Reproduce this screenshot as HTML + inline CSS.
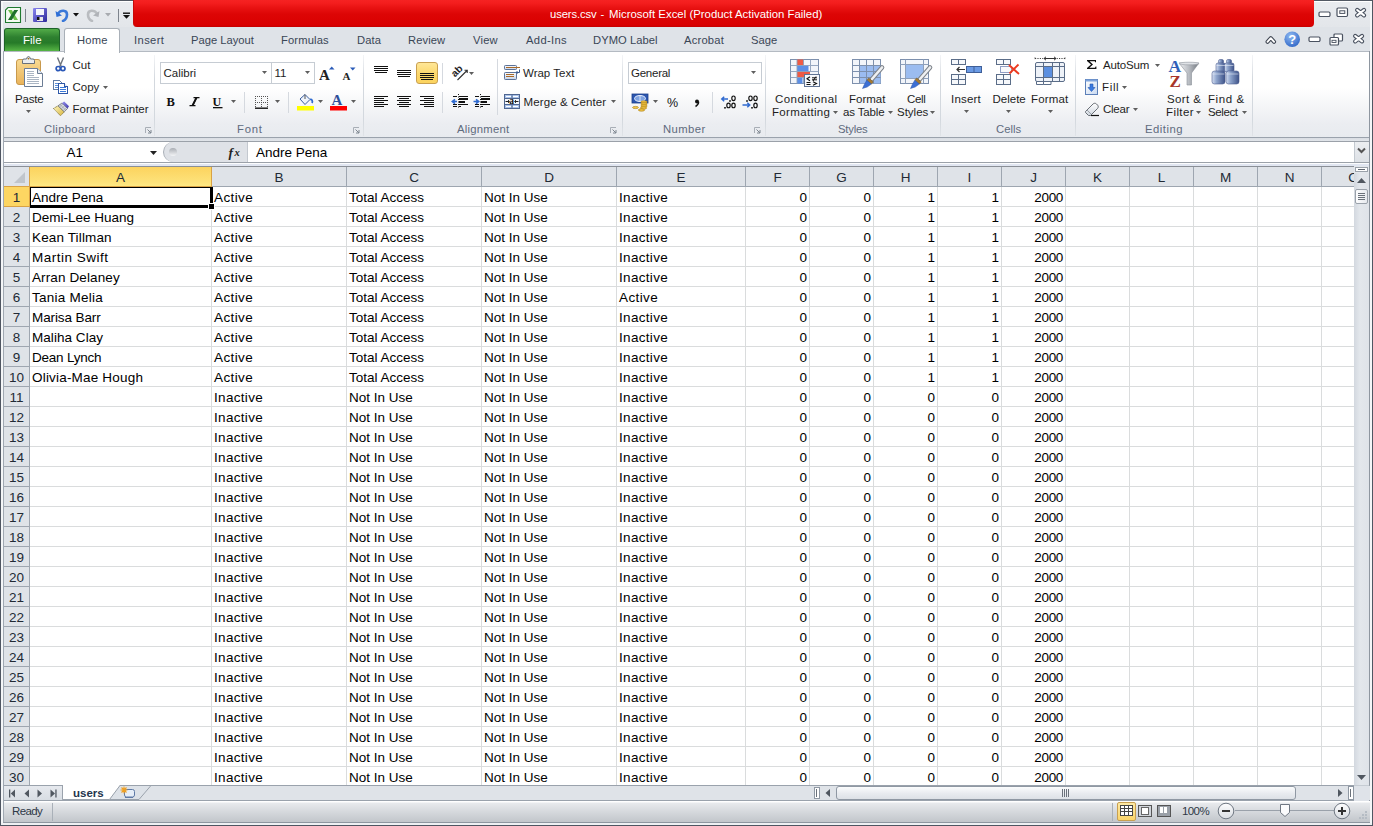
<!DOCTYPE html>
<html><head><meta charset="utf-8"><style>
*{margin:0;padding:0;box-sizing:border-box}
html,body{width:1373px;height:826px;overflow:hidden;background:#dfe3e8;font-family:"Liberation Sans", sans-serif}
.a{position:absolute}
.t{position:absolute;white-space:pre;line-height:1;font-family:"Liberation Sans", sans-serif}
.c{position:absolute;white-space:pre;font-size:13.5px;line-height:1;color:#000}
</style></head>
<body>
<div class="a" style="left:0px;top:0px;width:1373px;height:826px;background:#dfe3e8"></div><div class="a" style="left:0px;top:0px;width:1373px;height:27px;background:linear-gradient(#e9ecf0,#e3e6ea)"></div><div class="a" style="left:0px;top:0px;width:1373px;height:1px;background:#525964"></div><div class="a" style="left:1px;top:1px;width:1371px;height:1px;background:#ffffff"></div><div class="a" style="left:133px;top:0px;width:1181px;height:27px;background:linear-gradient(#f62222 0px,#f41e1e 3px,#e81212 8px,#dd0606 14px,#d90000 25px,#c40000 27px);border-radius:0 0 4px 4px;border-left:1px solid #c80a0a"></div><div class="t" style="left:550px;top:9.00px;font-size:11.25px;color:#ffffff;letter-spacing:-0.1px">users.csv</div><div class="t" style="left:600.5px;top:9.00px;font-size:11.25px;color:#ffffff;">-</div><div class="t" style="left:609px;top:9.00px;font-size:11.4px;color:#ffffff;">Microsoft Excel (Product Activation Failed)</div><div class="a" style="left:4px;top:28px;width:56px;height:24px;background:linear-gradient(#52ac48,#2e8030 35%,#267a28 60%,#5cbc48);border:1px solid #1d6328;border-bottom:none;border-radius:3px 3px 0 0"></div><div class="t" style="left:23px;top:35.00px;font-size:11.5px;color:#ffffff;">File</div><div class="t" style="left:134px;top:35.00px;font-size:11.2px;color:#3a4656;letter-spacing:0.4px">Insert</div><div class="t" style="left:191px;top:35.00px;font-size:11.2px;color:#3a4656;letter-spacing:0px">Page Layout</div><div class="t" style="left:281px;top:35.00px;font-size:11.2px;color:#3a4656;letter-spacing:0.15px">Formulas</div><div class="t" style="left:357px;top:35.00px;font-size:11.2px;color:#3a4656;letter-spacing:0.1px">Data</div><div class="t" style="left:408px;top:35.00px;font-size:11.2px;color:#3a4656;letter-spacing:0.1px">Review</div><div class="t" style="left:473px;top:35.00px;font-size:11.2px;color:#3a4656;letter-spacing:0.2px">View</div><div class="t" style="left:526px;top:35.00px;font-size:11.2px;color:#3a4656;letter-spacing:0.35px">Add-Ins</div><div class="t" style="left:593px;top:35.00px;font-size:11.2px;color:#3a4656;letter-spacing:0.05px">DYMO Label</div><div class="t" style="left:684px;top:35.00px;font-size:11.2px;color:#3a4656;letter-spacing:0.2px">Acrobat</div><div class="t" style="left:751px;top:35.00px;font-size:11.2px;color:#3a4656;letter-spacing:0px">Sage</div><div class="a" style="left:3px;top:51px;width:1367px;height:87px;background:linear-gradient(#ffffff 0%,#ffffff 42%,#f4f5f7 65%,#ebedf1 85%,#e8ebef 100%);border:1px solid #9aa2ac;border-top-color:#b4bac2"></div><div class="a" style="left:64px;top:28px;width:56px;height:25px;background:#fff;border:1px solid #a9b0b8;border-bottom:none;border-radius:3px 3px 0 0"></div><div class="t" style="left:77px;top:35.00px;font-size:11.2px;color:#3a4656;letter-spacing:0.2px">Home</div><div class="a" style="left:154px;top:55px;width:1px;height:81px;background:linear-gradient(#f4f5f7,#d3d8de 30%,#d3d8de 80%,#e0e3e7)"></div><div class="a" style="left:363px;top:55px;width:1px;height:81px;background:linear-gradient(#f4f5f7,#d3d8de 30%,#d3d8de 80%,#e0e3e7)"></div><div class="a" style="left:622px;top:55px;width:1px;height:81px;background:linear-gradient(#f4f5f7,#d3d8de 30%,#d3d8de 80%,#e0e3e7)"></div><div class="a" style="left:765px;top:55px;width:1px;height:81px;background:linear-gradient(#f4f5f7,#d3d8de 30%,#d3d8de 80%,#e0e3e7)"></div><div class="a" style="left:940px;top:55px;width:1px;height:81px;background:linear-gradient(#f4f5f7,#d3d8de 30%,#d3d8de 80%,#e0e3e7)"></div><div class="a" style="left:1075px;top:55px;width:1px;height:81px;background:linear-gradient(#f4f5f7,#d3d8de 30%,#d3d8de 80%,#e0e3e7)"></div><div class="a" style="left:1252px;top:55px;width:1px;height:81px;background:linear-gradient(#f4f5f7,#d3d8de 30%,#d3d8de 80%,#e0e3e7)"></div><div class="t" style="left:44px;top:124.00px;font-size:11.3px;color:#5f6b7e;letter-spacing:0.32px">Clipboard</div><div class="t" style="left:237px;top:124.00px;font-size:11.3px;color:#5f6b7e;letter-spacing:0.8px">Font</div><div class="t" style="left:457px;top:124.00px;font-size:11.3px;color:#5f6b7e;letter-spacing:0.25px">Alignment</div><div class="t" style="left:663px;top:124.00px;font-size:11.3px;color:#5f6b7e;letter-spacing:0.4px">Number</div><div class="t" style="left:838px;top:124.00px;font-size:11.3px;color:#5f6b7e;letter-spacing:-0.2px">Styles</div><div class="t" style="left:996px;top:124.00px;font-size:11.3px;color:#5f6b7e;letter-spacing:0px">Cells</div><div class="t" style="left:1145px;top:124.00px;font-size:11.3px;color:#5f6b7e;letter-spacing:0.5px">Editing</div><div class="t" style="left:15px;top:94.00px;font-size:11.5px;color:#1e1e1e;letter-spacing:-0.2px">Paste</div><div class="t" style="left:72.5px;top:60.00px;font-size:11.5px;color:#1e1e1e;">Cut</div><div class="t" style="left:72.5px;top:82.00px;font-size:11.5px;color:#1e1e1e;">Copy</div><div class="t" style="left:72.5px;top:104.00px;font-size:11.5px;color:#1e1e1e;">Format Painter</div><div class="a" style="left:160px;top:62px;width:112px;height:22px;background:#fff;border:1px solid #c6ccd3"></div><div class="a" style="left:271px;top:62px;width:44px;height:22px;background:#fff;border:1px solid #c6ccd3"></div><div class="t" style="left:163.5px;top:68.00px;font-size:11.5px;color:#1e1e1e;">Calibri</div><div class="t" style="left:274.5px;top:68.00px;font-size:11.5px;color:#1e1e1e;">11</div><div class="t" style="left:523px;top:68.00px;font-size:11.5px;color:#1e1e1e;">Wrap Text</div><div class="t" style="left:523.5px;top:97.00px;font-size:11.5px;color:#1e1e1e;letter-spacing:0.11px">Merge &amp; Center</div><div class="a" style="left:628px;top:62px;width:134px;height:22px;background:#fff;border:1px solid #c6ccd3"></div><div class="t" style="left:631px;top:68.00px;font-size:11.5px;color:#1e1e1e;letter-spacing:-0.25px">General</div><div class="t" style="left:775px;top:94.00px;font-size:11.5px;color:#1e1e1e;letter-spacing:0.45px">Conditional</div><div class="t" style="left:772px;top:107.00px;font-size:11.5px;color:#1e1e1e;letter-spacing:0.33px">Formatting</div><div class="t" style="left:849px;top:94.00px;font-size:11.5px;color:#1e1e1e;">Format</div><div class="t" style="left:843px;top:107.00px;font-size:11.5px;color:#1e1e1e;letter-spacing:-0.14px">as Table</div><div class="t" style="left:907px;top:94.00px;font-size:11.5px;color:#1e1e1e;letter-spacing:-0.3px">Cell</div><div class="t" style="left:897px;top:107.00px;font-size:11.5px;color:#1e1e1e;">Styles</div><div class="t" style="left:951px;top:94.00px;font-size:11.5px;color:#1e1e1e;letter-spacing:0.2px">Insert</div><div class="t" style="left:992.5px;top:94.00px;font-size:11.5px;color:#1e1e1e;">Delete</div><div class="t" style="left:1031px;top:94.00px;font-size:11.5px;color:#1e1e1e;letter-spacing:0.17px">Format</div><div class="t" style="left:1103px;top:60.00px;font-size:11.5px;color:#1e1e1e;letter-spacing:-0.15px">AutoSum</div><div class="t" style="left:1102px;top:82.00px;font-size:11.5px;color:#1e1e1e;letter-spacing:0.66px">Fill</div><div class="t" style="left:1103px;top:104.00px;font-size:11.5px;color:#1e1e1e;letter-spacing:-0.25px">Clear</div><div class="t" style="left:1167px;top:94.00px;font-size:11.5px;color:#1e1e1e;letter-spacing:0.4px">Sort &amp;</div><div class="t" style="left:1166px;top:107.00px;font-size:11.5px;color:#1e1e1e;letter-spacing:0.4px">Filter</div><div class="t" style="left:1208px;top:94.00px;font-size:11.5px;color:#1e1e1e;letter-spacing:0.6px">Find &amp;</div><div class="t" style="left:1208px;top:107.00px;font-size:11.5px;color:#1e1e1e;letter-spacing:-0.4px">Select</div><div class="a" style="left:4px;top:138px;width:1366px;height:4px;background:linear-gradient(#d9dde3,#e3e7ec)"></div><div class="a" style="left:4px;top:141px;width:1366px;height:22px;background:#fff;border-top:1px solid #9ba1a9;border-bottom:1px solid #9ba1a9"></div><div class="a" style="left:163px;top:142px;width:85px;height:20px;background:#dfe2e7;border-radius:10px 0 0 10px;border:1px solid #a9afb7;border-top:none;border-bottom:none;border-right:1px solid #c3c8cf"></div><svg class="a" style="left:166px;top:144px" width="14" height="16" viewBox="0 0 14 16" shape-rendering="geometricPrecision"><defs><linearGradient id="nbc" x1="0" y1="0" x2="0" y2="1"><stop offset="0" stop-color="#a9adb3"/><stop offset="1" stop-color="#f4f5f7"/></linearGradient></defs><circle cx="7" cy="8" r="4" fill="url(#nbc)"/></svg><svg class="a" style="left:227px;top:144px" width="18" height="16" viewBox="0 0 18 16" shape-rendering="geometricPrecision"><text x="1.5" y="12.5" font-family="Liberation Serif" font-style="italic" font-weight="bold" font-size="13.5" fill="#222">f</text><text x="7.5" y="12" font-family="Liberation Serif" font-style="italic" font-weight="bold" font-size="10.5" fill="#222">x</text></svg><svg class="a" style="left:150px;top:151px" width="7" height="4" viewBox="0 0 7 4" shape-rendering="geometricPrecision"><path d="M0 0H7L3.5 4Z" fill="#222"/></svg><div class="t" style="left:66.5px;top:146.00px;font-size:13.5px;color:#000;">A1</div><div class="t" style="left:256px;top:146.00px;font-size:13.5px;color:#000;">Andre Pena</div><div class="a" style="left:1354px;top:142px;width:15px;height:20px;background:linear-gradient(#eceef1,#dde1e6);border-left:1px solid #c3c9d0"></div><svg class="a" style="left:1357px;top:147px" width="9" height="7" viewBox="0 0 9 7" shape-rendering="geometricPrecision"><path d="M1 1.5L4.5 5L8 1.5" fill="none" stroke="#555" stroke-width="2"/></svg><div class="a" style="left:4px;top:163px;width:1366px;height:1px;background:#fbfcfd"></div><div class="a" style="left:4px;top:164px;width:1366px;height:2px;background:#e1e6f1"></div><div class="a" style="left:4px;top:166px;width:1350px;height:619px;background:#fff;overflow:hidden"><div class="a" style="left:0px;top:0px;width:1350px;height:21px;background:#dfe3e8;border-top:1px solid #8a8f96;border-bottom:1px solid #9ea6b0"></div><div class="a" style="left:0px;top:0px;width:26px;height:619px;background:#dfe3e8;border-right:1px solid #9ea6b0"></div><div class="a" style="left:0px;top:0px;width:26px;height:1px;background:#8a8f96"></div><svg class="a" style="left:9px;top:5px" width="13" height="13" viewBox="0 0 13 13"><path d="M12 1V12H1Z" fill="#c0c5cb"/></svg><div class="a" style="left:207px;top:21px;width:1px;height:599px;background:#dadcdd"></div><div class="a" style="left:207px;top:1px;width:1px;height:20px;background:#9ea6b0"></div><div class="a" style="left:342px;top:21px;width:1px;height:599px;background:#dadcdd"></div><div class="a" style="left:342px;top:1px;width:1px;height:20px;background:#9ea6b0"></div><div class="a" style="left:477px;top:21px;width:1px;height:599px;background:#dadcdd"></div><div class="a" style="left:477px;top:1px;width:1px;height:20px;background:#9ea6b0"></div><div class="a" style="left:612px;top:21px;width:1px;height:599px;background:#dadcdd"></div><div class="a" style="left:612px;top:1px;width:1px;height:20px;background:#9ea6b0"></div><div class="a" style="left:741px;top:21px;width:1px;height:599px;background:#dadcdd"></div><div class="a" style="left:741px;top:1px;width:1px;height:20px;background:#9ea6b0"></div><div class="a" style="left:805px;top:21px;width:1px;height:599px;background:#dadcdd"></div><div class="a" style="left:805px;top:1px;width:1px;height:20px;background:#9ea6b0"></div><div class="a" style="left:869px;top:21px;width:1px;height:599px;background:#dadcdd"></div><div class="a" style="left:869px;top:1px;width:1px;height:20px;background:#9ea6b0"></div><div class="a" style="left:933px;top:21px;width:1px;height:599px;background:#dadcdd"></div><div class="a" style="left:933px;top:1px;width:1px;height:20px;background:#9ea6b0"></div><div class="a" style="left:997px;top:21px;width:1px;height:599px;background:#dadcdd"></div><div class="a" style="left:997px;top:1px;width:1px;height:20px;background:#9ea6b0"></div><div class="a" style="left:1061px;top:21px;width:1px;height:599px;background:#dadcdd"></div><div class="a" style="left:1061px;top:1px;width:1px;height:20px;background:#9ea6b0"></div><div class="a" style="left:1125px;top:21px;width:1px;height:599px;background:#dadcdd"></div><div class="a" style="left:1125px;top:1px;width:1px;height:20px;background:#9ea6b0"></div><div class="a" style="left:1189px;top:21px;width:1px;height:599px;background:#dadcdd"></div><div class="a" style="left:1189px;top:1px;width:1px;height:20px;background:#9ea6b0"></div><div class="a" style="left:1253px;top:21px;width:1px;height:599px;background:#dadcdd"></div><div class="a" style="left:1253px;top:1px;width:1px;height:20px;background:#9ea6b0"></div><div class="a" style="left:1317px;top:21px;width:1px;height:599px;background:#dadcdd"></div><div class="a" style="left:1317px;top:1px;width:1px;height:20px;background:#9ea6b0"></div><div class="a" style="left:26px;top:40px;width:1324px;height:1px;background:#dadcdd"></div><div class="a" style="left:0px;top:40px;width:25px;height:1px;background:#9ea6b0"></div><div class="a" style="left:26px;top:60px;width:1324px;height:1px;background:#dadcdd"></div><div class="a" style="left:0px;top:60px;width:25px;height:1px;background:#9ea6b0"></div><div class="a" style="left:26px;top:80px;width:1324px;height:1px;background:#dadcdd"></div><div class="a" style="left:0px;top:80px;width:25px;height:1px;background:#9ea6b0"></div><div class="a" style="left:26px;top:100px;width:1324px;height:1px;background:#dadcdd"></div><div class="a" style="left:0px;top:100px;width:25px;height:1px;background:#9ea6b0"></div><div class="a" style="left:26px;top:120px;width:1324px;height:1px;background:#dadcdd"></div><div class="a" style="left:0px;top:120px;width:25px;height:1px;background:#9ea6b0"></div><div class="a" style="left:26px;top:140px;width:1324px;height:1px;background:#dadcdd"></div><div class="a" style="left:0px;top:140px;width:25px;height:1px;background:#9ea6b0"></div><div class="a" style="left:26px;top:160px;width:1324px;height:1px;background:#dadcdd"></div><div class="a" style="left:0px;top:160px;width:25px;height:1px;background:#9ea6b0"></div><div class="a" style="left:26px;top:180px;width:1324px;height:1px;background:#dadcdd"></div><div class="a" style="left:0px;top:180px;width:25px;height:1px;background:#9ea6b0"></div><div class="a" style="left:26px;top:200px;width:1324px;height:1px;background:#dadcdd"></div><div class="a" style="left:0px;top:200px;width:25px;height:1px;background:#9ea6b0"></div><div class="a" style="left:26px;top:220px;width:1324px;height:1px;background:#dadcdd"></div><div class="a" style="left:0px;top:220px;width:25px;height:1px;background:#9ea6b0"></div><div class="a" style="left:26px;top:240px;width:1324px;height:1px;background:#dadcdd"></div><div class="a" style="left:0px;top:240px;width:25px;height:1px;background:#9ea6b0"></div><div class="a" style="left:26px;top:260px;width:1324px;height:1px;background:#dadcdd"></div><div class="a" style="left:0px;top:260px;width:25px;height:1px;background:#9ea6b0"></div><div class="a" style="left:26px;top:280px;width:1324px;height:1px;background:#dadcdd"></div><div class="a" style="left:0px;top:280px;width:25px;height:1px;background:#9ea6b0"></div><div class="a" style="left:26px;top:300px;width:1324px;height:1px;background:#dadcdd"></div><div class="a" style="left:0px;top:300px;width:25px;height:1px;background:#9ea6b0"></div><div class="a" style="left:26px;top:320px;width:1324px;height:1px;background:#dadcdd"></div><div class="a" style="left:0px;top:320px;width:25px;height:1px;background:#9ea6b0"></div><div class="a" style="left:26px;top:340px;width:1324px;height:1px;background:#dadcdd"></div><div class="a" style="left:0px;top:340px;width:25px;height:1px;background:#9ea6b0"></div><div class="a" style="left:26px;top:360px;width:1324px;height:1px;background:#dadcdd"></div><div class="a" style="left:0px;top:360px;width:25px;height:1px;background:#9ea6b0"></div><div class="a" style="left:26px;top:380px;width:1324px;height:1px;background:#dadcdd"></div><div class="a" style="left:0px;top:380px;width:25px;height:1px;background:#9ea6b0"></div><div class="a" style="left:26px;top:400px;width:1324px;height:1px;background:#dadcdd"></div><div class="a" style="left:0px;top:400px;width:25px;height:1px;background:#9ea6b0"></div><div class="a" style="left:26px;top:420px;width:1324px;height:1px;background:#dadcdd"></div><div class="a" style="left:0px;top:420px;width:25px;height:1px;background:#9ea6b0"></div><div class="a" style="left:26px;top:440px;width:1324px;height:1px;background:#dadcdd"></div><div class="a" style="left:0px;top:440px;width:25px;height:1px;background:#9ea6b0"></div><div class="a" style="left:26px;top:460px;width:1324px;height:1px;background:#dadcdd"></div><div class="a" style="left:0px;top:460px;width:25px;height:1px;background:#9ea6b0"></div><div class="a" style="left:26px;top:480px;width:1324px;height:1px;background:#dadcdd"></div><div class="a" style="left:0px;top:480px;width:25px;height:1px;background:#9ea6b0"></div><div class="a" style="left:26px;top:500px;width:1324px;height:1px;background:#dadcdd"></div><div class="a" style="left:0px;top:500px;width:25px;height:1px;background:#9ea6b0"></div><div class="a" style="left:26px;top:520px;width:1324px;height:1px;background:#dadcdd"></div><div class="a" style="left:0px;top:520px;width:25px;height:1px;background:#9ea6b0"></div><div class="a" style="left:26px;top:540px;width:1324px;height:1px;background:#dadcdd"></div><div class="a" style="left:0px;top:540px;width:25px;height:1px;background:#9ea6b0"></div><div class="a" style="left:26px;top:560px;width:1324px;height:1px;background:#dadcdd"></div><div class="a" style="left:0px;top:560px;width:25px;height:1px;background:#9ea6b0"></div><div class="a" style="left:26px;top:580px;width:1324px;height:1px;background:#dadcdd"></div><div class="a" style="left:0px;top:580px;width:25px;height:1px;background:#9ea6b0"></div><div class="a" style="left:26px;top:600px;width:1324px;height:1px;background:#dadcdd"></div><div class="a" style="left:0px;top:600px;width:25px;height:1px;background:#9ea6b0"></div><div class="a" style="left:25px;top:1px;width:183px;height:20px;background:linear-gradient(#fcd35e,#fde27a 80%,#fee983);border-left:1px solid #d9a244;border-right:1px solid #d9a244;border-bottom:1px solid #d9a244"></div><div class="a" style="left:0px;top:20px;width:26px;height:21px;background:#fdd662;border-top:1px solid #d9a244;border-bottom:1px solid #d9a244;border-right:1px solid #d9a244"></div><div class="t" style="left:25px;top:4.57px;width:183px;text-align:center;font-size:13.5px;color:#222a35">A</div><div class="t" style="left:207px;top:4.57px;width:136px;text-align:center;font-size:13.5px;color:#222a35">B</div><div class="t" style="left:342px;top:4.57px;width:136px;text-align:center;font-size:13.5px;color:#222a35">C</div><div class="t" style="left:477px;top:4.57px;width:136px;text-align:center;font-size:13.5px;color:#222a35">D</div><div class="t" style="left:612px;top:4.57px;width:130px;text-align:center;font-size:13.5px;color:#222a35">E</div><div class="t" style="left:741px;top:4.57px;width:65px;text-align:center;font-size:13.5px;color:#222a35">F</div><div class="t" style="left:805px;top:4.57px;width:65px;text-align:center;font-size:13.5px;color:#222a35">G</div><div class="t" style="left:869px;top:4.57px;width:65px;text-align:center;font-size:13.5px;color:#222a35">H</div><div class="t" style="left:933px;top:4.57px;width:65px;text-align:center;font-size:13.5px;color:#222a35">I</div><div class="t" style="left:997px;top:4.57px;width:65px;text-align:center;font-size:13.5px;color:#222a35">J</div><div class="t" style="left:1061px;top:4.57px;width:65px;text-align:center;font-size:13.5px;color:#222a35">K</div><div class="t" style="left:1125px;top:4.57px;width:65px;text-align:center;font-size:13.5px;color:#222a35">L</div><div class="t" style="left:1189px;top:4.57px;width:65px;text-align:center;font-size:13.5px;color:#222a35">M</div><div class="t" style="left:1253px;top:4.57px;width:65px;text-align:center;font-size:13.5px;color:#222a35">N</div><div class="t" style="left:1317px;top:4.57px;width:65px;text-align:center;font-size:13.5px;color:#222a35">O</div><div class="t" style="left:0px;top:24.57px;width:25px;text-align:center;font-size:13.5px;color:#222a35">1</div><div class="t" style="left:0px;top:44.57px;width:25px;text-align:center;font-size:13.5px;color:#222a35">2</div><div class="t" style="left:0px;top:64.57px;width:25px;text-align:center;font-size:13.5px;color:#222a35">3</div><div class="t" style="left:0px;top:84.57px;width:25px;text-align:center;font-size:13.5px;color:#222a35">4</div><div class="t" style="left:0px;top:104.57px;width:25px;text-align:center;font-size:13.5px;color:#222a35">5</div><div class="t" style="left:0px;top:124.57px;width:25px;text-align:center;font-size:13.5px;color:#222a35">6</div><div class="t" style="left:0px;top:144.57px;width:25px;text-align:center;font-size:13.5px;color:#222a35">7</div><div class="t" style="left:0px;top:164.57px;width:25px;text-align:center;font-size:13.5px;color:#222a35">8</div><div class="t" style="left:0px;top:184.57px;width:25px;text-align:center;font-size:13.5px;color:#222a35">9</div><div class="t" style="left:0px;top:204.57px;width:25px;text-align:center;font-size:13.5px;color:#222a35">10</div><div class="t" style="left:0px;top:224.57px;width:25px;text-align:center;font-size:13.5px;color:#222a35">11</div><div class="t" style="left:0px;top:244.57px;width:25px;text-align:center;font-size:13.5px;color:#222a35">12</div><div class="t" style="left:0px;top:264.57px;width:25px;text-align:center;font-size:13.5px;color:#222a35">13</div><div class="t" style="left:0px;top:284.57px;width:25px;text-align:center;font-size:13.5px;color:#222a35">14</div><div class="t" style="left:0px;top:304.57px;width:25px;text-align:center;font-size:13.5px;color:#222a35">15</div><div class="t" style="left:0px;top:324.57px;width:25px;text-align:center;font-size:13.5px;color:#222a35">16</div><div class="t" style="left:0px;top:344.57px;width:25px;text-align:center;font-size:13.5px;color:#222a35">17</div><div class="t" style="left:0px;top:364.57px;width:25px;text-align:center;font-size:13.5px;color:#222a35">18</div><div class="t" style="left:0px;top:384.57px;width:25px;text-align:center;font-size:13.5px;color:#222a35">19</div><div class="t" style="left:0px;top:404.57px;width:25px;text-align:center;font-size:13.5px;color:#222a35">20</div><div class="t" style="left:0px;top:424.57px;width:25px;text-align:center;font-size:13.5px;color:#222a35">21</div><div class="t" style="left:0px;top:444.57px;width:25px;text-align:center;font-size:13.5px;color:#222a35">22</div><div class="t" style="left:0px;top:464.57px;width:25px;text-align:center;font-size:13.5px;color:#222a35">23</div><div class="t" style="left:0px;top:484.57px;width:25px;text-align:center;font-size:13.5px;color:#222a35">24</div><div class="t" style="left:0px;top:504.57px;width:25px;text-align:center;font-size:13.5px;color:#222a35">25</div><div class="t" style="left:0px;top:524.57px;width:25px;text-align:center;font-size:13.5px;color:#222a35">26</div><div class="t" style="left:0px;top:544.57px;width:25px;text-align:center;font-size:13.5px;color:#222a35">27</div><div class="t" style="left:0px;top:564.57px;width:25px;text-align:center;font-size:13.5px;color:#222a35">28</div><div class="t" style="left:0px;top:584.57px;width:25px;text-align:center;font-size:13.5px;color:#222a35">29</div><div class="t" style="left:0px;top:604.57px;width:25px;text-align:center;font-size:13.5px;color:#222a35">30</div><div class="c" style="left:28px;top:24.57px">Andre Pena</div><div class="c" style="left:210px;top:24.57px;letter-spacing:0.4px">Active</div><div class="c" style="left:345px;top:24.57px">Total Access</div><div class="c" style="left:480px;top:24.57px">Not In Use</div><div class="c" style="left:615px;top:24.57px;letter-spacing:0.31px">Inactive</div><div class="c" style="left:741px;top:24.57px;width:62px;text-align:right">0</div><div class="c" style="left:805px;top:24.57px;width:62px;text-align:right">0</div><div class="c" style="left:869px;top:24.57px;width:62px;text-align:right">1</div><div class="c" style="left:933px;top:24.57px;width:62px;text-align:right">1</div><div class="c" style="left:997px;top:24.57px;width:62px;text-align:right;letter-spacing:-0.35px">2000</div><div class="c" style="left:28px;top:44.57px">Demi-Lee Huang</div><div class="c" style="left:210px;top:44.57px;letter-spacing:0.4px">Active</div><div class="c" style="left:345px;top:44.57px">Total Access</div><div class="c" style="left:480px;top:44.57px">Not In Use</div><div class="c" style="left:615px;top:44.57px;letter-spacing:0.31px">Inactive</div><div class="c" style="left:741px;top:44.57px;width:62px;text-align:right">0</div><div class="c" style="left:805px;top:44.57px;width:62px;text-align:right">0</div><div class="c" style="left:869px;top:44.57px;width:62px;text-align:right">1</div><div class="c" style="left:933px;top:44.57px;width:62px;text-align:right">1</div><div class="c" style="left:997px;top:44.57px;width:62px;text-align:right;letter-spacing:-0.35px">2000</div><div class="c" style="left:28px;top:64.57px;letter-spacing:0.14px">Kean Tillman</div><div class="c" style="left:210px;top:64.57px;letter-spacing:0.4px">Active</div><div class="c" style="left:345px;top:64.57px">Total Access</div><div class="c" style="left:480px;top:64.57px">Not In Use</div><div class="c" style="left:615px;top:64.57px;letter-spacing:0.31px">Inactive</div><div class="c" style="left:741px;top:64.57px;width:62px;text-align:right">0</div><div class="c" style="left:805px;top:64.57px;width:62px;text-align:right">0</div><div class="c" style="left:869px;top:64.57px;width:62px;text-align:right">1</div><div class="c" style="left:933px;top:64.57px;width:62px;text-align:right">1</div><div class="c" style="left:997px;top:64.57px;width:62px;text-align:right;letter-spacing:-0.35px">2000</div><div class="c" style="left:28px;top:84.57px;letter-spacing:0.49px">Martin Swift</div><div class="c" style="left:210px;top:84.57px;letter-spacing:0.4px">Active</div><div class="c" style="left:345px;top:84.57px">Total Access</div><div class="c" style="left:480px;top:84.57px">Not In Use</div><div class="c" style="left:615px;top:84.57px;letter-spacing:0.31px">Inactive</div><div class="c" style="left:741px;top:84.57px;width:62px;text-align:right">0</div><div class="c" style="left:805px;top:84.57px;width:62px;text-align:right">0</div><div class="c" style="left:869px;top:84.57px;width:62px;text-align:right">1</div><div class="c" style="left:933px;top:84.57px;width:62px;text-align:right">1</div><div class="c" style="left:997px;top:84.57px;width:62px;text-align:right;letter-spacing:-0.35px">2000</div><div class="c" style="left:28px;top:104.57px;letter-spacing:0.12px">Arran Delaney</div><div class="c" style="left:210px;top:104.57px;letter-spacing:0.4px">Active</div><div class="c" style="left:345px;top:104.57px">Total Access</div><div class="c" style="left:480px;top:104.57px">Not In Use</div><div class="c" style="left:615px;top:104.57px;letter-spacing:0.31px">Inactive</div><div class="c" style="left:741px;top:104.57px;width:62px;text-align:right">0</div><div class="c" style="left:805px;top:104.57px;width:62px;text-align:right">0</div><div class="c" style="left:869px;top:104.57px;width:62px;text-align:right">1</div><div class="c" style="left:933px;top:104.57px;width:62px;text-align:right">1</div><div class="c" style="left:997px;top:104.57px;width:62px;text-align:right;letter-spacing:-0.35px">2000</div><div class="c" style="left:28px;top:124.57px;letter-spacing:0.24px">Tania Melia</div><div class="c" style="left:210px;top:124.57px;letter-spacing:0.4px">Active</div><div class="c" style="left:345px;top:124.57px">Total Access</div><div class="c" style="left:480px;top:124.57px">Not In Use</div><div class="c" style="left:615px;top:124.57px;letter-spacing:0.4px">Active</div><div class="c" style="left:741px;top:124.57px;width:62px;text-align:right">0</div><div class="c" style="left:805px;top:124.57px;width:62px;text-align:right">0</div><div class="c" style="left:869px;top:124.57px;width:62px;text-align:right">1</div><div class="c" style="left:933px;top:124.57px;width:62px;text-align:right">1</div><div class="c" style="left:997px;top:124.57px;width:62px;text-align:right;letter-spacing:-0.35px">2000</div><div class="c" style="left:28px;top:144.57px;letter-spacing:-0.1px">Marisa Barr</div><div class="c" style="left:210px;top:144.57px;letter-spacing:0.4px">Active</div><div class="c" style="left:345px;top:144.57px">Total Access</div><div class="c" style="left:480px;top:144.57px">Not In Use</div><div class="c" style="left:615px;top:144.57px;letter-spacing:0.31px">Inactive</div><div class="c" style="left:741px;top:144.57px;width:62px;text-align:right">0</div><div class="c" style="left:805px;top:144.57px;width:62px;text-align:right">0</div><div class="c" style="left:869px;top:144.57px;width:62px;text-align:right">1</div><div class="c" style="left:933px;top:144.57px;width:62px;text-align:right">1</div><div class="c" style="left:997px;top:144.57px;width:62px;text-align:right;letter-spacing:-0.35px">2000</div><div class="c" style="left:28px;top:164.57px;letter-spacing:0.05px">Maliha Clay</div><div class="c" style="left:210px;top:164.57px;letter-spacing:0.4px">Active</div><div class="c" style="left:345px;top:164.57px">Total Access</div><div class="c" style="left:480px;top:164.57px">Not In Use</div><div class="c" style="left:615px;top:164.57px;letter-spacing:0.31px">Inactive</div><div class="c" style="left:741px;top:164.57px;width:62px;text-align:right">0</div><div class="c" style="left:805px;top:164.57px;width:62px;text-align:right">0</div><div class="c" style="left:869px;top:164.57px;width:62px;text-align:right">1</div><div class="c" style="left:933px;top:164.57px;width:62px;text-align:right">1</div><div class="c" style="left:997px;top:164.57px;width:62px;text-align:right;letter-spacing:-0.35px">2000</div><div class="c" style="left:28px;top:184.57px;letter-spacing:-0.22px">Dean Lynch</div><div class="c" style="left:210px;top:184.57px;letter-spacing:0.4px">Active</div><div class="c" style="left:345px;top:184.57px">Total Access</div><div class="c" style="left:480px;top:184.57px">Not In Use</div><div class="c" style="left:615px;top:184.57px;letter-spacing:0.31px">Inactive</div><div class="c" style="left:741px;top:184.57px;width:62px;text-align:right">0</div><div class="c" style="left:805px;top:184.57px;width:62px;text-align:right">0</div><div class="c" style="left:869px;top:184.57px;width:62px;text-align:right">1</div><div class="c" style="left:933px;top:184.57px;width:62px;text-align:right">1</div><div class="c" style="left:997px;top:184.57px;width:62px;text-align:right;letter-spacing:-0.35px">2000</div><div class="c" style="left:28px;top:204.57px;letter-spacing:0.19px">Olivia-Mae Hough</div><div class="c" style="left:210px;top:204.57px;letter-spacing:0.4px">Active</div><div class="c" style="left:345px;top:204.57px">Total Access</div><div class="c" style="left:480px;top:204.57px">Not In Use</div><div class="c" style="left:615px;top:204.57px;letter-spacing:0.31px">Inactive</div><div class="c" style="left:741px;top:204.57px;width:62px;text-align:right">0</div><div class="c" style="left:805px;top:204.57px;width:62px;text-align:right">0</div><div class="c" style="left:869px;top:204.57px;width:62px;text-align:right">1</div><div class="c" style="left:933px;top:204.57px;width:62px;text-align:right">1</div><div class="c" style="left:997px;top:204.57px;width:62px;text-align:right;letter-spacing:-0.35px">2000</div><div class="c" style="left:210px;top:224.57px;letter-spacing:0.31px">Inactive</div><div class="c" style="left:345px;top:224.57px">Not In Use</div><div class="c" style="left:480px;top:224.57px">Not In Use</div><div class="c" style="left:615px;top:224.57px;letter-spacing:0.31px">Inactive</div><div class="c" style="left:741px;top:224.57px;width:62px;text-align:right">0</div><div class="c" style="left:805px;top:224.57px;width:62px;text-align:right">0</div><div class="c" style="left:869px;top:224.57px;width:62px;text-align:right">0</div><div class="c" style="left:933px;top:224.57px;width:62px;text-align:right">0</div><div class="c" style="left:997px;top:224.57px;width:62px;text-align:right;letter-spacing:-0.35px">2000</div><div class="c" style="left:210px;top:244.57px;letter-spacing:0.31px">Inactive</div><div class="c" style="left:345px;top:244.57px">Not In Use</div><div class="c" style="left:480px;top:244.57px">Not In Use</div><div class="c" style="left:615px;top:244.57px;letter-spacing:0.31px">Inactive</div><div class="c" style="left:741px;top:244.57px;width:62px;text-align:right">0</div><div class="c" style="left:805px;top:244.57px;width:62px;text-align:right">0</div><div class="c" style="left:869px;top:244.57px;width:62px;text-align:right">0</div><div class="c" style="left:933px;top:244.57px;width:62px;text-align:right">0</div><div class="c" style="left:997px;top:244.57px;width:62px;text-align:right;letter-spacing:-0.35px">2000</div><div class="c" style="left:210px;top:264.57px;letter-spacing:0.31px">Inactive</div><div class="c" style="left:345px;top:264.57px">Not In Use</div><div class="c" style="left:480px;top:264.57px">Not In Use</div><div class="c" style="left:615px;top:264.57px;letter-spacing:0.31px">Inactive</div><div class="c" style="left:741px;top:264.57px;width:62px;text-align:right">0</div><div class="c" style="left:805px;top:264.57px;width:62px;text-align:right">0</div><div class="c" style="left:869px;top:264.57px;width:62px;text-align:right">0</div><div class="c" style="left:933px;top:264.57px;width:62px;text-align:right">0</div><div class="c" style="left:997px;top:264.57px;width:62px;text-align:right;letter-spacing:-0.35px">2000</div><div class="c" style="left:210px;top:284.57px;letter-spacing:0.31px">Inactive</div><div class="c" style="left:345px;top:284.57px">Not In Use</div><div class="c" style="left:480px;top:284.57px">Not In Use</div><div class="c" style="left:615px;top:284.57px;letter-spacing:0.31px">Inactive</div><div class="c" style="left:741px;top:284.57px;width:62px;text-align:right">0</div><div class="c" style="left:805px;top:284.57px;width:62px;text-align:right">0</div><div class="c" style="left:869px;top:284.57px;width:62px;text-align:right">0</div><div class="c" style="left:933px;top:284.57px;width:62px;text-align:right">0</div><div class="c" style="left:997px;top:284.57px;width:62px;text-align:right;letter-spacing:-0.35px">2000</div><div class="c" style="left:210px;top:304.57px;letter-spacing:0.31px">Inactive</div><div class="c" style="left:345px;top:304.57px">Not In Use</div><div class="c" style="left:480px;top:304.57px">Not In Use</div><div class="c" style="left:615px;top:304.57px;letter-spacing:0.31px">Inactive</div><div class="c" style="left:741px;top:304.57px;width:62px;text-align:right">0</div><div class="c" style="left:805px;top:304.57px;width:62px;text-align:right">0</div><div class="c" style="left:869px;top:304.57px;width:62px;text-align:right">0</div><div class="c" style="left:933px;top:304.57px;width:62px;text-align:right">0</div><div class="c" style="left:997px;top:304.57px;width:62px;text-align:right;letter-spacing:-0.35px">2000</div><div class="c" style="left:210px;top:324.57px;letter-spacing:0.31px">Inactive</div><div class="c" style="left:345px;top:324.57px">Not In Use</div><div class="c" style="left:480px;top:324.57px">Not In Use</div><div class="c" style="left:615px;top:324.57px;letter-spacing:0.31px">Inactive</div><div class="c" style="left:741px;top:324.57px;width:62px;text-align:right">0</div><div class="c" style="left:805px;top:324.57px;width:62px;text-align:right">0</div><div class="c" style="left:869px;top:324.57px;width:62px;text-align:right">0</div><div class="c" style="left:933px;top:324.57px;width:62px;text-align:right">0</div><div class="c" style="left:997px;top:324.57px;width:62px;text-align:right;letter-spacing:-0.35px">2000</div><div class="c" style="left:210px;top:344.57px;letter-spacing:0.31px">Inactive</div><div class="c" style="left:345px;top:344.57px">Not In Use</div><div class="c" style="left:480px;top:344.57px">Not In Use</div><div class="c" style="left:615px;top:344.57px;letter-spacing:0.31px">Inactive</div><div class="c" style="left:741px;top:344.57px;width:62px;text-align:right">0</div><div class="c" style="left:805px;top:344.57px;width:62px;text-align:right">0</div><div class="c" style="left:869px;top:344.57px;width:62px;text-align:right">0</div><div class="c" style="left:933px;top:344.57px;width:62px;text-align:right">0</div><div class="c" style="left:997px;top:344.57px;width:62px;text-align:right;letter-spacing:-0.35px">2000</div><div class="c" style="left:210px;top:364.57px;letter-spacing:0.31px">Inactive</div><div class="c" style="left:345px;top:364.57px">Not In Use</div><div class="c" style="left:480px;top:364.57px">Not In Use</div><div class="c" style="left:615px;top:364.57px;letter-spacing:0.31px">Inactive</div><div class="c" style="left:741px;top:364.57px;width:62px;text-align:right">0</div><div class="c" style="left:805px;top:364.57px;width:62px;text-align:right">0</div><div class="c" style="left:869px;top:364.57px;width:62px;text-align:right">0</div><div class="c" style="left:933px;top:364.57px;width:62px;text-align:right">0</div><div class="c" style="left:997px;top:364.57px;width:62px;text-align:right;letter-spacing:-0.35px">2000</div><div class="c" style="left:210px;top:384.57px;letter-spacing:0.31px">Inactive</div><div class="c" style="left:345px;top:384.57px">Not In Use</div><div class="c" style="left:480px;top:384.57px">Not In Use</div><div class="c" style="left:615px;top:384.57px;letter-spacing:0.31px">Inactive</div><div class="c" style="left:741px;top:384.57px;width:62px;text-align:right">0</div><div class="c" style="left:805px;top:384.57px;width:62px;text-align:right">0</div><div class="c" style="left:869px;top:384.57px;width:62px;text-align:right">0</div><div class="c" style="left:933px;top:384.57px;width:62px;text-align:right">0</div><div class="c" style="left:997px;top:384.57px;width:62px;text-align:right;letter-spacing:-0.35px">2000</div><div class="c" style="left:210px;top:404.57px;letter-spacing:0.31px">Inactive</div><div class="c" style="left:345px;top:404.57px">Not In Use</div><div class="c" style="left:480px;top:404.57px">Not In Use</div><div class="c" style="left:615px;top:404.57px;letter-spacing:0.31px">Inactive</div><div class="c" style="left:741px;top:404.57px;width:62px;text-align:right">0</div><div class="c" style="left:805px;top:404.57px;width:62px;text-align:right">0</div><div class="c" style="left:869px;top:404.57px;width:62px;text-align:right">0</div><div class="c" style="left:933px;top:404.57px;width:62px;text-align:right">0</div><div class="c" style="left:997px;top:404.57px;width:62px;text-align:right;letter-spacing:-0.35px">2000</div><div class="c" style="left:210px;top:424.57px;letter-spacing:0.31px">Inactive</div><div class="c" style="left:345px;top:424.57px">Not In Use</div><div class="c" style="left:480px;top:424.57px">Not In Use</div><div class="c" style="left:615px;top:424.57px;letter-spacing:0.31px">Inactive</div><div class="c" style="left:741px;top:424.57px;width:62px;text-align:right">0</div><div class="c" style="left:805px;top:424.57px;width:62px;text-align:right">0</div><div class="c" style="left:869px;top:424.57px;width:62px;text-align:right">0</div><div class="c" style="left:933px;top:424.57px;width:62px;text-align:right">0</div><div class="c" style="left:997px;top:424.57px;width:62px;text-align:right;letter-spacing:-0.35px">2000</div><div class="c" style="left:210px;top:444.57px;letter-spacing:0.31px">Inactive</div><div class="c" style="left:345px;top:444.57px">Not In Use</div><div class="c" style="left:480px;top:444.57px">Not In Use</div><div class="c" style="left:615px;top:444.57px;letter-spacing:0.31px">Inactive</div><div class="c" style="left:741px;top:444.57px;width:62px;text-align:right">0</div><div class="c" style="left:805px;top:444.57px;width:62px;text-align:right">0</div><div class="c" style="left:869px;top:444.57px;width:62px;text-align:right">0</div><div class="c" style="left:933px;top:444.57px;width:62px;text-align:right">0</div><div class="c" style="left:997px;top:444.57px;width:62px;text-align:right;letter-spacing:-0.35px">2000</div><div class="c" style="left:210px;top:464.57px;letter-spacing:0.31px">Inactive</div><div class="c" style="left:345px;top:464.57px">Not In Use</div><div class="c" style="left:480px;top:464.57px">Not In Use</div><div class="c" style="left:615px;top:464.57px;letter-spacing:0.31px">Inactive</div><div class="c" style="left:741px;top:464.57px;width:62px;text-align:right">0</div><div class="c" style="left:805px;top:464.57px;width:62px;text-align:right">0</div><div class="c" style="left:869px;top:464.57px;width:62px;text-align:right">0</div><div class="c" style="left:933px;top:464.57px;width:62px;text-align:right">0</div><div class="c" style="left:997px;top:464.57px;width:62px;text-align:right;letter-spacing:-0.35px">2000</div><div class="c" style="left:210px;top:484.57px;letter-spacing:0.31px">Inactive</div><div class="c" style="left:345px;top:484.57px">Not In Use</div><div class="c" style="left:480px;top:484.57px">Not In Use</div><div class="c" style="left:615px;top:484.57px;letter-spacing:0.31px">Inactive</div><div class="c" style="left:741px;top:484.57px;width:62px;text-align:right">0</div><div class="c" style="left:805px;top:484.57px;width:62px;text-align:right">0</div><div class="c" style="left:869px;top:484.57px;width:62px;text-align:right">0</div><div class="c" style="left:933px;top:484.57px;width:62px;text-align:right">0</div><div class="c" style="left:997px;top:484.57px;width:62px;text-align:right;letter-spacing:-0.35px">2000</div><div class="c" style="left:210px;top:504.57px;letter-spacing:0.31px">Inactive</div><div class="c" style="left:345px;top:504.57px">Not In Use</div><div class="c" style="left:480px;top:504.57px">Not In Use</div><div class="c" style="left:615px;top:504.57px;letter-spacing:0.31px">Inactive</div><div class="c" style="left:741px;top:504.57px;width:62px;text-align:right">0</div><div class="c" style="left:805px;top:504.57px;width:62px;text-align:right">0</div><div class="c" style="left:869px;top:504.57px;width:62px;text-align:right">0</div><div class="c" style="left:933px;top:504.57px;width:62px;text-align:right">0</div><div class="c" style="left:997px;top:504.57px;width:62px;text-align:right;letter-spacing:-0.35px">2000</div><div class="c" style="left:210px;top:524.57px;letter-spacing:0.31px">Inactive</div><div class="c" style="left:345px;top:524.57px">Not In Use</div><div class="c" style="left:480px;top:524.57px">Not In Use</div><div class="c" style="left:615px;top:524.57px;letter-spacing:0.31px">Inactive</div><div class="c" style="left:741px;top:524.57px;width:62px;text-align:right">0</div><div class="c" style="left:805px;top:524.57px;width:62px;text-align:right">0</div><div class="c" style="left:869px;top:524.57px;width:62px;text-align:right">0</div><div class="c" style="left:933px;top:524.57px;width:62px;text-align:right">0</div><div class="c" style="left:997px;top:524.57px;width:62px;text-align:right;letter-spacing:-0.35px">2000</div><div class="c" style="left:210px;top:544.57px;letter-spacing:0.31px">Inactive</div><div class="c" style="left:345px;top:544.57px">Not In Use</div><div class="c" style="left:480px;top:544.57px">Not In Use</div><div class="c" style="left:615px;top:544.57px;letter-spacing:0.31px">Inactive</div><div class="c" style="left:741px;top:544.57px;width:62px;text-align:right">0</div><div class="c" style="left:805px;top:544.57px;width:62px;text-align:right">0</div><div class="c" style="left:869px;top:544.57px;width:62px;text-align:right">0</div><div class="c" style="left:933px;top:544.57px;width:62px;text-align:right">0</div><div class="c" style="left:997px;top:544.57px;width:62px;text-align:right;letter-spacing:-0.35px">2000</div><div class="c" style="left:210px;top:564.57px;letter-spacing:0.31px">Inactive</div><div class="c" style="left:345px;top:564.57px">Not In Use</div><div class="c" style="left:480px;top:564.57px">Not In Use</div><div class="c" style="left:615px;top:564.57px;letter-spacing:0.31px">Inactive</div><div class="c" style="left:741px;top:564.57px;width:62px;text-align:right">0</div><div class="c" style="left:805px;top:564.57px;width:62px;text-align:right">0</div><div class="c" style="left:869px;top:564.57px;width:62px;text-align:right">0</div><div class="c" style="left:933px;top:564.57px;width:62px;text-align:right">0</div><div class="c" style="left:997px;top:564.57px;width:62px;text-align:right;letter-spacing:-0.35px">2000</div><div class="c" style="left:210px;top:584.57px;letter-spacing:0.31px">Inactive</div><div class="c" style="left:345px;top:584.57px">Not In Use</div><div class="c" style="left:480px;top:584.57px">Not In Use</div><div class="c" style="left:615px;top:584.57px;letter-spacing:0.31px">Inactive</div><div class="c" style="left:741px;top:584.57px;width:62px;text-align:right">0</div><div class="c" style="left:805px;top:584.57px;width:62px;text-align:right">0</div><div class="c" style="left:869px;top:584.57px;width:62px;text-align:right">0</div><div class="c" style="left:933px;top:584.57px;width:62px;text-align:right">0</div><div class="c" style="left:997px;top:584.57px;width:62px;text-align:right;letter-spacing:-0.35px">2000</div><div class="c" style="left:210px;top:604.57px;letter-spacing:0.31px">Inactive</div><div class="c" style="left:345px;top:604.57px">Not In Use</div><div class="c" style="left:480px;top:604.57px">Not In Use</div><div class="c" style="left:615px;top:604.57px;letter-spacing:0.31px">Inactive</div><div class="c" style="left:741px;top:604.57px;width:62px;text-align:right">0</div><div class="c" style="left:805px;top:604.57px;width:62px;text-align:right">0</div><div class="c" style="left:869px;top:604.57px;width:62px;text-align:right">0</div><div class="c" style="left:933px;top:604.57px;width:62px;text-align:right">0</div><div class="c" style="left:997px;top:604.57px;width:62px;text-align:right;letter-spacing:-0.35px">2000</div><div class="a" style="left:26px;top:21px;width:1px;height:19px;background:#000"></div><div class="a" style="left:26px;top:21px;width:181px;height:1px;background:#000"></div><div class="a" style="left:206px;top:21px;width:3px;height:16px;background:#000"></div><div class="a" style="left:26px;top:39px;width:178px;height:3px;background:#000"></div><div class="a" style="left:204px;top:37px;width:7px;height:7px;background:#fff"></div><div class="a" style="left:205px;top:38px;width:5px;height:5px;background:#000"></div></div><div class="a" style="left:1354px;top:166px;width:15px;height:619px;background:linear-gradient(90deg,#d3d8df,#e3e7ec 40%,#dfe3e9)"></div><div class="a" style="left:1354px;top:166px;width:15px;height:7px;background:#e3e7ec"></div><div class="a" style="left:1355px;top:167px;width:13px;height:5px;background:#fff;border:1px solid #9aa1aa"></div><div class="a" style="left:1358px;top:169px;width:7px;height:1px;background:#5f6670"></div><svg class="a" style="left:1356px;top:177px" width="11" height="7" viewBox="0 0 11 7" shape-rendering="geometricPrecision"><path d="M1 6H10L5.5 1Z" fill="#505760"/></svg><div class="a" style="left:1355px;top:189px;width:13px;height:15px;background:linear-gradient(90deg,#fdfdfe,#e6e9ee);border:1px solid #9aa1aa;border-radius:2px"></div><div class="a" style="left:1358px;top:193px;width:7px;height:1px;background:#6a717a"></div><div class="a" style="left:1358px;top:195px;width:7px;height:1px;background:#6a717a"></div><div class="a" style="left:1358px;top:197px;width:7px;height:1px;background:#6a717a"></div><div class="a" style="left:1358px;top:199px;width:7px;height:1px;background:#6a717a"></div><svg class="a" style="left:1356px;top:774px" width="11" height="7" viewBox="0 0 11 7" shape-rendering="geometricPrecision"><path d="M1 1H10L5.5 6Z" fill="#505760"/></svg><div class="a" style="left:1369px;top:51px;width:1px;height:770px;background:#8e96a0"></div><div class="a" style="left:4px;top:785px;width:1366px;height:16px;background:#dfe3e8;border-top:1px solid #9aa2ac;border-bottom:1px solid #9aa2ac"></div><div class="a" style="left:4px;top:786px;width:59px;height:14px;background:linear-gradient(#e6e9ee,#d8dde3);border-right:1px solid #a8b0b9"></div><svg class="a" style="left:8px;top:789px" width="52" height="9" viewBox="0 0 52 9" shape-rendering="geometricPrecision"><g fill="#505760"><rect x="1" y="0.5" width="1.3" height="8"/><path d="M7 0.5V8.5L2.8 4.5Z"/><path d="M21 0.5V8.5L16.5 4.5Z"/><path d="M29.5 0.5V8.5L34 4.5Z"/><path d="M42.5 0.5V8.5L47 4.5Z"/><rect x="47.3" y="0.5" width="1.3" height="8"/></g></svg><svg class="a" style="left:62px;top:785px" width="60" height="16" viewBox="0 0 60 16" shape-rendering="geometricPrecision"><path d="M0.5 0V14.5H47.5L58 0Z" fill="#ffffff"/><path d="M0.5 0V14.5H47.5" fill="none" stroke="#9aa2ac"/></svg><div class="t" style="left:73px;top:788.00px;font-size:11.5px;color:#24344c;font-weight:bold">users</div><svg class="a" style="left:104px;top:785px" width="50" height="16" viewBox="0 0 50 16" shape-rendering="geometricPrecision"><path d="M5.5 14.5L16 0.5H47L35 14.5Z" fill="#dde2e8" stroke="#9aa2ac"/></svg><svg class="a" style="left:120px;top:786px" width="17" height="13" viewBox="0 0 17 13" shape-rendering="geometricPrecision"><rect x="4.5" y="3.5" width="10" height="7.5" rx="2" fill="#e6eef8" stroke="#5f7aa6"/><path d="M5 11.5H13" stroke="#5f7aa6"/><path d="M4 0.5V7.5M0.5 4H7.5M1.5 1.5L6.5 6.5M6.5 1.5L1.5 6.5" stroke="#f0a020" stroke-width="1.1"/></svg><div class="a" style="left:814px;top:787px;width:6px;height:12px;background:#fff;border:1px solid #8f98a3"></div><div class="a" style="left:816px;top:789px;width:1px;height:8px;background:#6a717a"></div><svg class="a" style="left:824px;top:788px" width="7" height="10" viewBox="0 0 7 10" shape-rendering="geometricPrecision"><path d="M6 1V9L1.5 5Z" fill="#505760"/></svg><div class="a" style="left:836px;top:786px;width:460px;height:14px;background:linear-gradient(#fbfcfd,#e8ebef 55%,#dde1e6);border:1px solid #8f98a3;border-radius:3px"></div><div class="a" style="left:1062px;top:789px;width:1px;height:8px;background:#6a717a"></div><div class="a" style="left:1064px;top:789px;width:1px;height:8px;background:#6a717a"></div><div class="a" style="left:1066px;top:789px;width:1px;height:8px;background:#6a717a"></div><div class="a" style="left:1068px;top:789px;width:1px;height:8px;background:#6a717a"></div><svg class="a" style="left:1337px;top:788px" width="7" height="10" viewBox="0 0 7 10" shape-rendering="geometricPrecision"><path d="M1 1V9L5.5 5Z" fill="#505760"/></svg><div class="a" style="left:1348px;top:786px;width:6px;height:14px;background:#fff;border:1px solid #8f98a3"></div><div class="a" style="left:1350px;top:789px;width:1px;height:8px;background:#6a717a"></div><div class="a" style="left:1354px;top:785px;width:15px;height:16px;background:#dfe3e9;border-top:1px solid #c6ccd3"></div><div class="a" style="left:3px;top:801px;width:1367px;height:21px;background:linear-gradient(#ffffff 0px,#ffffff 1px,#e8eaed 2px,#d6d9dd 50%,#c2c6cb 100%)"></div><div class="a" style="left:52px;top:803px;width:1px;height:18px;background:#a9b0b8"></div><div class="t" style="left:12px;top:806.00px;font-size:11.5px;color:#2e3846;letter-spacing:-0.6px">Ready</div><div class="a" style="left:1112px;top:803px;width:1px;height:18px;background:#a9b0b8"></div><div class="a" style="left:1117px;top:802px;width:19px;height:19px;background:linear-gradient(#fde9a5,#fbd56a);border:1px solid #c9a050;border-radius:2px"></div><svg class="a" style="left:1120px;top:805px" width="14" height="12" viewBox="0 0 14 12" shape-rendering="crispEdges"><rect x="0.5" y="0.5" width="12" height="10" fill="#fff" stroke="#444"/><path d="M0.5 3.5H12.5M0.5 6.5H12.5M4.5 0.5V10.5M8.5 0.5V10.5" stroke="#444"/></svg><svg class="a" style="left:1138px;top:805px" width="15" height="13" viewBox="0 0 15 13" shape-rendering="crispEdges"><rect x="0.5" y="0.5" width="13" height="11" fill="#d0d4da" stroke="#555"/><rect x="3.5" y="2.5" width="7" height="7" fill="#fff" stroke="#666"/></svg><svg class="a" style="left:1157px;top:805px" width="15" height="13" viewBox="0 0 15 13" shape-rendering="crispEdges"><rect x="0.5" y="0.5" width="13" height="11" fill="#9aa0a8" stroke="#555"/><rect x="2.5" y="1.5" width="3" height="6" fill="#fff"/><rect x="6.5" y="1.5" width="3" height="6" fill="#fff"/></svg><div class="t" style="left:1182px;top:806.00px;font-size:11.5px;color:#2e3846;letter-spacing:-0.6px">100%</div><svg class="a" style="left:1217px;top:802px" width="18" height="18" viewBox="0 0 18 18" shape-rendering="geometricPrecision"><circle cx="9" cy="9" r="7.8" fill="url(#zg)" stroke="#6f7782"/><defs><linearGradient id="zg" x1="0" y1="0" x2="0" y2="1"><stop offset="0" stop-color="#fdfdfe"/><stop offset="1" stop-color="#d9dde2"/></linearGradient></defs><rect x="5" y="8" width="8" height="2" fill="#333"/></svg><div class="a" style="left:1235px;top:810px;width:99px;height:1px;background:#9aa1aa"></div><svg class="a" style="left:1279px;top:803px" width="12" height="15" viewBox="0 0 12 15" shape-rendering="geometricPrecision"><path d="M1.5 1.5H10.5V9.5L6 13.5L1.5 9.5Z" fill="#fbfbfc" stroke="#6f7782"/></svg><svg class="a" style="left:1333px;top:802px" width="18" height="18" viewBox="0 0 18 18" shape-rendering="geometricPrecision"><circle cx="9" cy="9" r="7.8" fill="url(#zg)" stroke="#6f7782"/><rect x="5" y="8" width="8" height="2" fill="#333"/><rect x="8" y="5" width="2" height="8" fill="#333"/></svg><svg class="a" style="left:1356px;top:810px" width="13" height="11" viewBox="0 0 13 11" shape-rendering="geometricPrecision"><g fill="#b5bcc4"><rect x="9" y="1" width="2" height="2"/><rect x="6" y="4" width="2" height="2"/><rect x="9" y="4" width="2" height="2"/><rect x="3" y="7" width="2" height="2"/><rect x="6" y="7" width="2" height="2"/><rect x="9" y="7" width="2" height="2"/></g></svg><div class="a" style="left:0px;top:0px;width:1px;height:826px;background:#4f5662"></div><div class="a" style="left:1px;top:2px;width:2px;height:823px;background:#f4f6f8"></div><div class="a" style="left:1370px;top:2px;width:2px;height:823px;background:#f4f6f8"></div><div class="a" style="left:3px;top:52px;width:1px;height:770px;background:#a0a8b2"></div><div class="a" style="left:3px;top:822px;width:1367px;height:1px;background:#8e96a0"></div><div class="a" style="left:1px;top:823px;width:1371px;height:2px;background:#eef0f3"></div><div class="a" style="left:1372px;top:0px;width:1px;height:826px;background:#4f5662"></div><div class="a" style="left:0px;top:825px;width:1373px;height:1px;background:#4f5662"></div><svg class="a" style="left:5px;top:7px" width="17" height="17" viewBox="0 0 17 17" shape-rendering="geometricPrecision"><path d="M3 0.5H15.5V15.5H0.5V3Z" fill="#f4fbf2" stroke="#1f7a30" stroke-width="1.1"/><path d="M3 3H6.8L13 13H9.2Z" fill="#6cc04a"/><path d="M13 3H9.2L3 13H6.8Z" fill="#1f6e2c"/><path d="M10.5 5.5L13 3H11.5L9.5 5.8Z" fill="#1f6e2c"/></svg><div class="a" style="left:25px;top:9px;width:1px;height:13px;background:#7d848d"></div><svg class="a" style="left:33px;top:8px" width="15" height="15" viewBox="0 0 15 15" shape-rendering="geometricPrecision"><defs><linearGradient id="sg" x1="0" y1="0" x2="1" y2="1"><stop offset="0" stop-color="#8a86f0"/><stop offset="1" stop-color="#2e2a9a"/></linearGradient></defs><rect x="0" y="0" width="14" height="14" rx="1" fill="url(#sg)"/><rect x="3" y="1" width="8" height="6" fill="#f4f6fb"/><rect x="4" y="9" width="6" height="4" fill="#e8e8e8"/><rect x="4" y="9" width="2.5" height="3" fill="#111"/></svg><svg class="a" style="left:55px;top:7px" width="14" height="15" viewBox="0 0 14 15" shape-rendering="geometricPrecision"><path d="M3 6.5 C5.5 2.8 12 2.5 12 7.5 C12 11 10 13 8 14" fill="none" stroke="#3a78d8" stroke-width="2.6" stroke-linecap="round"/><path d="M0.5 4 L1.5 10 L7 8.5 Z" fill="#2f6fd6"/></svg><svg class="a" style="left:73px;top:13px" width="7" height="4" viewBox="0 0 7 4" shape-rendering="geometricPrecision"><path d="M0 0H6L3 3.5Z" fill="#111"/></svg><svg class="a" style="left:86px;top:7px" width="14" height="15" viewBox="0 0 14 15" shape-rendering="geometricPrecision"><path d="M11 6.5 C8.5 2.8 2 2.5 2 7.5 C2 11 4 13 6 14" fill="none" stroke="#b9bcc0" stroke-width="2.6" stroke-linecap="round"/><path d="M13.5 4 L12.5 10 L7 8.5 Z" fill="#b0b3b8"/></svg><svg class="a" style="left:105px;top:13px" width="7" height="4" viewBox="0 0 7 4" shape-rendering="geometricPrecision"><path d="M0 0H6L3 3.5Z" fill="#a8abb0"/></svg><div class="a" style="left:118px;top:9px;width:1px;height:13px;background:#7d848d"></div><svg class="a" style="left:122px;top:12px" width="9" height="8" viewBox="0 0 9 8" shape-rendering="geometricPrecision"><rect x="1" y="0.5" width="7" height="1.4" fill="#111"/><path d="M1 3H8L4.5 6.8Z" fill="#111"/></svg><svg class="a" style="left:1318px;top:11px" width="14" height="7" viewBox="0 0 14 7" shape-rendering="geometricPrecision"><rect x="1" y="1" width="11" height="4.5" rx="1.2" fill="#fff" stroke="#4a5260" stroke-width="1.2"/></svg><svg class="a" style="left:1336px;top:7px" width="14" height="11" viewBox="0 0 14 11" shape-rendering="geometricPrecision"><rect x="1" y="1" width="10.5" height="8.5" rx="1.2" fill="#fff" stroke="#4a5260" stroke-width="1.2"/><rect x="3.8" y="3.8" width="5" height="2.6" fill="none" stroke="#4a5260" stroke-width="1"/></svg><svg class="a" style="left:1354px;top:7px" width="14" height="11" viewBox="0 0 14 11" shape-rendering="geometricPrecision"><path d="M3.2 3L10 8.4M10 3L3.2 8.4" stroke="#4a5260" stroke-width="4.2" stroke-linecap="round"/><path d="M3.2 3L10 8.4M10 3L3.2 8.4" stroke="#fff" stroke-width="2.1" stroke-linecap="round"/></svg><svg class="a" style="left:1265px;top:35px" width="12" height="10" viewBox="0 0 12 10" shape-rendering="geometricPrecision"><path d="M2.5 6.8L5.8 3.2L9.1 6.8" fill="none" stroke="#3f4652" stroke-width="4" stroke-linecap="round" stroke-linejoin="round"/><path d="M2.5 6.8L5.8 3.2L9.1 6.8" fill="none" stroke="#fff" stroke-width="1.9" stroke-linecap="round" stroke-linejoin="round"/></svg><svg class="a" style="left:1284px;top:31px" width="17" height="17" viewBox="0 0 17 17" shape-rendering="geometricPrecision"><defs><radialGradient id="hg" cx="0.4" cy="0.3" r="0.8"><stop offset="0" stop-color="#8fb9f2"/><stop offset="1" stop-color="#2a62c4"/></radialGradient></defs><circle cx="8.2" cy="8.2" r="7.8" fill="url(#hg)"/><text x="8.2" y="12.8" text-anchor="middle" font-family="Liberation Sans" font-weight="bold" font-size="13" fill="#fff">?</text></svg><svg class="a" style="left:1308px;top:36px" width="14" height="7" viewBox="0 0 14 7" shape-rendering="geometricPrecision"><rect x="1" y="1" width="11" height="4.5" rx="1.2" fill="#fff" stroke="#4a5260" stroke-width="1.2"/></svg><svg class="a" style="left:1329px;top:33px" width="15" height="13" viewBox="0 0 15 13" shape-rendering="geometricPrecision"><rect x="5" y="1" width="8.5" height="7" rx="1" fill="#fff" stroke="#4a5260" stroke-width="1.2"/><rect x="1" y="4.5" width="8.5" height="7.5" rx="1" fill="#fff" stroke="#4a5260" stroke-width="1.2"/><rect x="3" y="7.3" width="4" height="2.2" fill="none" stroke="#4a5260" stroke-width="0.9"/></svg><svg class="a" style="left:1352px;top:33px" width="14" height="11" viewBox="0 0 14 11" shape-rendering="geometricPrecision"><path d="M3.2 3L10 8.4M10 3L3.2 8.4" stroke="#4a5260" stroke-width="4.2" stroke-linecap="round"/><path d="M3.2 3L10 8.4M10 3L3.2 8.4" stroke="#fff" stroke-width="2.1" stroke-linecap="round"/></svg><svg class="a" style="left:15px;top:55px" width="29" height="34" viewBox="0 0 29 34" shape-rendering="geometricPrecision"><defs><linearGradient id="cbg" x1="0" y1="0" x2="0" y2="1"><stop offset="0" stop-color="#f8da92"/><stop offset="1" stop-color="#eab35a"/></linearGradient></defs><rect x="1.5" y="4.5" width="24" height="25" rx="2.5" fill="url(#cbg)" stroke="#c8994c"/><path d="M7.5 8.5V5.5Q7.5 4 9 4H11.5Q12 1.5 13.5 1.5Q15 1.5 15.5 4H18Q19.5 4 19.5 5.5V8.5Z" fill="#e9ecef" stroke="#68707b"/><circle cx="13.5" cy="3.6" r="0.9" fill="#a07020"/><path d="M9.5 13.5H22.5L27.5 18.5V31.5H9.5Z" fill="#fff" stroke="#6c7d95"/><path d="M22.5 13.5V18.5H27.5" fill="#e6ebf2" stroke="#6c7d95"/></svg><svg class="a" style="left:15px;top:55px" width="29" height="34" viewBox="0 0 29 34" shape-rendering="crispEdges"><rect x="12" y="16" width="7" height="1" fill="#aab5c3"/><rect x="12" y="18" width="7" height="1" fill="#aab5c3"/><rect x="12" y="20" width="7" height="1" fill="#aab5c3"/><rect x="12" y="22" width="12" height="1" fill="#aab5c3"/><rect x="12" y="24" width="12" height="1" fill="#aab5c3"/><rect x="12" y="26" width="12" height="1" fill="#aab5c3"/><rect x="12" y="28" width="12" height="1" fill="#aab5c3"/></svg><svg class="a" style="left:26px;top:110px" width="5" height="3" viewBox="0 0 5 3" shape-rendering="geometricPrecision"><path d="M0 0H5L2.5 3Z" fill="#5e5e5e"/></svg><svg class="a" style="left:55px;top:57px" width="11" height="16" viewBox="0 0 11 16" shape-rendering="geometricPrecision"><path d="M2.5 0.5L6.2 9.5M8.5 0.5L4.8 9.5" stroke="#6f747c" stroke-width="1.4"/><circle cx="3.2" cy="11.6" r="2.1" fill="none" stroke="#2b58b8" stroke-width="1.7"/><circle cx="7.9" cy="11.6" r="2.1" fill="none" stroke="#2b58b8" stroke-width="1.7"/></svg><svg class="a" style="left:52px;top:79px" width="17" height="15" viewBox="0 0 17 15" shape-rendering="crispEdges"><path d="M1.5 1.5H7.5L9.5 3.5V10.5H1.5Z" fill="#fff" stroke="#5f7ca6"/><rect x="3" y="4" width="4" height="1" fill="#5b8fd8"/><rect x="3" y="6" width="5" height="1" fill="#5b8fd8"/><rect x="3" y="8" width="5" height="1" fill="#5b8fd8"/><path d="M6.5 4.5H12.5L15.5 7.5V14.5H6.5Z" fill="#fff" stroke="#2d57a8"/><path d="M12.5 4.5V7.5H15.5" fill="#dfe8f5" stroke="#2d57a8"/><rect x="8" y="8" width="6" height="1" fill="#3a78d8"/><rect x="8" y="10" width="6" height="1" fill="#3a78d8"/><rect x="8" y="12" width="6" height="1" fill="#3a78d8"/></svg><svg class="a" style="left:103px;top:86px" width="5" height="3" viewBox="0 0 5 3" shape-rendering="geometricPrecision"><path d="M0 0H5L2.5 3Z" fill="#5e5e5e"/></svg><svg class="a" style="left:52px;top:101px" width="18" height="17" viewBox="0 0 18 17" shape-rendering="geometricPrecision"><defs><linearGradient id="fpg" x1="0" y1="0" x2="1" y2="1"><stop offset="0" stop-color="#fdf6c0"/><stop offset="1" stop-color="#d8b43c"/></linearGradient><linearGradient id="fph" x1="0" y1="0" x2="1" y2="1"><stop offset="0" stop-color="#9a96f0"/><stop offset="1" stop-color="#3a34a8"/></linearGradient></defs><path d="M1.5 7.5L6 4.8L12.3 10.8L8.5 14.8Z" fill="url(#fpg)" stroke="#6d5e22" stroke-width="0.8" stroke-dasharray="1 0.6"/><path d="M6 4.8L10 2L15.5 7.5L12.3 10.8Z" fill="#d6d9de" stroke="#5e636b" stroke-width="0.7"/><path d="M8 3.5L13.8 9.2M7.5 6L11 3M9.5 7.5L13 4.5M11.5 9.3L14.5 6.3" stroke="#8a9098" stroke-width="0.5"/><path d="M10 2L12.2 0.6L17 5.2L15.5 7.5Z" fill="url(#fph)"/></svg><svg class="a" style="left:145px;top:127px" width="7" height="7" viewBox="0 0 7 7" shape-rendering="geometricPrecision"><path d="M0.5 6V0.5H6" stroke="#a8aeb6" fill="none"/><path d="M2.5 2.5L6 6M6 3V6H3" stroke="#7d858f" stroke-width="1" fill="none"/></svg><svg class="a" style="left:262px;top:71px" width="5" height="3" viewBox="0 0 5 3" shape-rendering="geometricPrecision"><path d="M0 0H5L2.5 3Z" fill="#5e5e5e"/></svg><svg class="a" style="left:305px;top:71px" width="5" height="3" viewBox="0 0 5 3" shape-rendering="geometricPrecision"><path d="M0 0H5L2.5 3Z" fill="#5e5e5e"/></svg><svg class="a" style="left:319px;top:65px" width="17" height="16" viewBox="0 0 17 16" shape-rendering="geometricPrecision"><text x="0" y="14.5" font-family="Liberation Serif" font-weight="bold" font-size="15" fill="#222">A</text><path d="M10 4.5H15.5L12.75 1.5Z" fill="#2a5bb8"/></svg><svg class="a" style="left:342px;top:66px" width="15" height="15" viewBox="0 0 15 15" shape-rendering="geometricPrecision"><text x="0.5" y="13.5" font-family="Liberation Serif" font-weight="bold" font-size="11" fill="#222">A</text><path d="M8 1.5H13.5L10.75 4.5Z" fill="#2a5bb8"/></svg><svg class="a" style="left:165px;top:94px" width="14" height="14" viewBox="0 0 14 14" shape-rendering="geometricPrecision"><text x="1.5" y="12" font-family="Liberation Serif" font-weight="bold" font-size="12.5" fill="#111">B</text></svg><svg class="a" style="left:188px;top:94px" width="14" height="14" viewBox="0 0 14 14" shape-rendering="geometricPrecision"><path d="M5.5 3.6H11.5M1.5 11.6H7.5M8.5 3.6L4.5 11.6" stroke="#111" stroke-width="1.3" fill="none"/><path d="M8.5 3.6L4.5 11.6" stroke="#111" stroke-width="2" fill="none"/></svg><svg class="a" style="left:211px;top:94px" width="14" height="16" viewBox="0 0 14 16" shape-rendering="geometricPrecision"><text x="1.5" y="11.5" font-family="Liberation Serif" font-weight="bold" font-size="12" fill="#111">U</text><rect x="2" y="13" width="9.5" height="1.3" fill="#111"/></svg><svg class="a" style="left:231px;top:100px" width="5" height="3" viewBox="0 0 5 3" shape-rendering="geometricPrecision"><path d="M0 0H5L2.5 3Z" fill="#5e5e5e"/></svg><div class="a" style="left:244px;top:92px;width:1px;height:21px;background:#d5d9df"></div><svg class="a" style="left:254px;top:95px" width="15" height="15" viewBox="0 0 15 15" shape-rendering="geometricPrecision"><path d="M1 1.5H14M1 7.5H14M1.5 1V13M7.5 1V13M13.5 1V13" stroke="#555" stroke-width="1" stroke-dasharray="1 1" fill="none"/><rect x="1" y="12.5" width="13" height="1.4" fill="#111"/></svg><svg class="a" style="left:275px;top:100px" width="5" height="3" viewBox="0 0 5 3" shape-rendering="geometricPrecision"><path d="M0 0H5L2.5 3Z" fill="#5e5e5e"/></svg><div class="a" style="left:288px;top:92px;width:1px;height:21px;background:#d5d9df"></div><svg class="a" style="left:296px;top:93px" width="19" height="18" viewBox="0 0 19 18" shape-rendering="geometricPrecision"><path d="M4 6L9 1.5L14 6.5L9 11.5Z" fill="#eef3fb" stroke="#3c5fa0" stroke-width="1"/><path d="M9 1.5V6" stroke="#555" stroke-width="1"/><path d="M14 6.5C16 6 17 8 16 10" stroke="#2f6ad0" stroke-width="1.8" fill="none"/><rect x="1" y="13" width="17" height="4.5" fill="#ffff00"/></svg><svg class="a" style="left:318px;top:100px" width="5" height="3" viewBox="0 0 5 3" shape-rendering="geometricPrecision"><path d="M0 0H5L2.5 3Z" fill="#5e5e5e"/></svg><svg class="a" style="left:329px;top:92px" width="19" height="19" viewBox="0 0 19 19" shape-rendering="geometricPrecision"><text x="2.5" y="13" font-family="Liberation Serif" font-weight="bold" font-size="15" fill="#2f4f9a">A</text><rect x="1" y="14" width="17" height="4.5" fill="#ff0000"/></svg><svg class="a" style="left:351px;top:100px" width="5" height="3" viewBox="0 0 5 3" shape-rendering="geometricPrecision"><path d="M0 0H5L2.5 3Z" fill="#5e5e5e"/></svg><svg class="a" style="left:353px;top:127px" width="7" height="7" viewBox="0 0 7 7" shape-rendering="geometricPrecision"><path d="M0.5 6V0.5H6" stroke="#a8aeb6" fill="none"/><path d="M2.5 2.5L6 6M6 3V6H3" stroke="#7d858f" stroke-width="1" fill="none"/></svg><svg class="a" style="left:374px;top:65px" width="16" height="16" viewBox="0 0 16 16" shape-rendering="crispEdges"><rect x="0" y="1" width="14" height="1" fill="#111"/><rect x="0" y="3" width="14" height="1" fill="#111"/><rect x="0" y="5" width="14" height="1" fill="#111"/><rect x="1" y="7" width="12" height="1" fill="#111"/></svg><svg class="a" style="left:397px;top:69px" width="16" height="16" viewBox="0 0 16 16" shape-rendering="crispEdges"><rect x="0" y="1" width="14" height="1" fill="#111"/><rect x="0" y="3" width="14" height="1" fill="#111"/><rect x="0" y="5" width="14" height="1" fill="#111"/><rect x="1" y="7" width="12" height="1" fill="#111"/></svg><div class="a" style="left:416px;top:62px;width:22px;height:22px;background:linear-gradient(#ffe797,#fcd668 60%,#fbd35f);border:1px solid #c9a050;border-radius:3px"></div><svg class="a" style="left:420px;top:72px" width="16" height="16" viewBox="0 0 16 16" shape-rendering="crispEdges"><rect x="0" y="1" width="14" height="1" fill="#111"/><rect x="0" y="3" width="14" height="1" fill="#111"/><rect x="0" y="5" width="14" height="1" fill="#111"/><rect x="1" y="7" width="12" height="1" fill="#111"/></svg><div class="a" style="left:442px;top:63px;width:1px;height:21px;background:#d5d9df"></div><svg class="a" style="left:451px;top:64px" width="18" height="17" viewBox="0 0 18 17" shape-rendering="geometricPrecision"><text x="0" y="0" transform="translate(4 13.5) rotate(-45)" font-family="Liberation Sans" font-weight="bold" font-size="10" fill="#222">ab</text><path d="M6.5 16L16 6.5M13.5 6.3L16.3 6.2L16.2 9" stroke="#333" stroke-width="1.1" fill="none"/></svg><svg class="a" style="left:469px;top:72px" width="5" height="3" viewBox="0 0 5 3" shape-rendering="geometricPrecision"><path d="M0 0H5L2.5 3Z" fill="#5e5e5e"/></svg><svg class="a" style="left:374px;top:95px" width="16" height="16" viewBox="0 0 16 16" shape-rendering="crispEdges"><rect x="0" y="1" width="14" height="1" fill="#111"/><rect x="0" y="3" width="10" height="1" fill="#111"/><rect x="0" y="5" width="14" height="1" fill="#111"/><rect x="0" y="7" width="10" height="1" fill="#111"/><rect x="0" y="9" width="14" height="1" fill="#111"/><rect x="0" y="11" width="10" height="1" fill="#111"/></svg><svg class="a" style="left:397px;top:95px" width="16" height="16" viewBox="0 0 16 16" shape-rendering="crispEdges"><rect x="0" y="1" width="14" height="1" fill="#111"/><rect x="2" y="3" width="10" height="1" fill="#111"/><rect x="0" y="5" width="14" height="1" fill="#111"/><rect x="2" y="7" width="10" height="1" fill="#111"/><rect x="0" y="9" width="14" height="1" fill="#111"/><rect x="2" y="11" width="10" height="1" fill="#111"/></svg><svg class="a" style="left:420px;top:95px" width="16" height="16" viewBox="0 0 16 16" shape-rendering="crispEdges"><rect x="0" y="1" width="14" height="1" fill="#111"/><rect x="4" y="3" width="10" height="1" fill="#111"/><rect x="0" y="5" width="14" height="1" fill="#111"/><rect x="4" y="7" width="10" height="1" fill="#111"/><rect x="0" y="9" width="14" height="1" fill="#111"/><rect x="4" y="11" width="10" height="1" fill="#111"/></svg><div class="a" style="left:442px;top:92px;width:1px;height:21px;background:#d5d9df"></div><svg class="a" style="left:451px;top:93px" width="18" height="17" viewBox="0 0 18 17" shape-rendering="geometricPrecision"><path d="M7.5 1V16" stroke="#111" stroke-width="1" stroke-dasharray="1 1.5"/><rect x="2" y="3" width="4" height="1" fill="#111"/><rect x="2" y="11" width="4" height="1" fill="#111"/><rect x="2" y="13" width="4" height="1" fill="#111"/><rect x="8" y="3" width="9" height="1" fill="#111"/><rect x="8" y="5" width="9" height="2" fill="#111"/><rect x="8" y="8" width="6" height="2" fill="#111"/><rect x="8" y="11" width="9" height="1" fill="#111"/><rect x="8" y="13" width="2" height="1" fill="#111"/><path d="M6 8.5H1.5M4 6.3L1.3 8.5L4 10.7" stroke="#2f6ad0" stroke-width="1.6" fill="none"/></svg><svg class="a" style="left:473px;top:93px" width="18" height="17" viewBox="0 0 18 17" shape-rendering="geometricPrecision"><path d="M7.5 1V16" stroke="#111" stroke-width="1" stroke-dasharray="1 1.5"/><rect x="2" y="3" width="4" height="1" fill="#111"/><rect x="2" y="11" width="4" height="1" fill="#111"/><rect x="2" y="13" width="4" height="1" fill="#111"/><rect x="8" y="3" width="9" height="1" fill="#111"/><rect x="8" y="5" width="9" height="2" fill="#111"/><rect x="8" y="8" width="6" height="2" fill="#111"/><rect x="8" y="11" width="9" height="1" fill="#111"/><rect x="8" y="13" width="2" height="1" fill="#111"/><path d="M0.5 8.5H5M3 6.3L5.7 8.5L3 10.7" stroke="#2f6ad0" stroke-width="1.6" fill="none"/></svg><div class="a" style="left:497px;top:59px;width:1px;height:56px;background:#d5d9df"></div><svg class="a" style="left:503px;top:64px" width="19" height="17" viewBox="0 0 19 17" shape-rendering="geometricPrecision"><defs><linearGradient id="wb" x1="0" y1="0" x2="0" y2="1"><stop offset="0" stop-color="#fdfdfe"/><stop offset="1" stop-color="#c5d3ea"/></linearGradient></defs><rect x="1.5" y="1.5" width="12" height="4" rx="0.8" fill="url(#wb)" stroke="#5b7298"/><rect x="1.5" y="8.5" width="12" height="7" rx="0.8" fill="url(#wb)" stroke="#5b7298"/></svg><svg class="a" style="left:503px;top:64px" width="19" height="17" viewBox="0 0 19 17" shape-rendering="crispEdges"><rect x="3" y="3" width="14" height="1" fill="#a86a2a"/><rect x="3" y="10" width="8" height="1" fill="#a86a2a"/><rect x="3" y="12" width="8" height="1" fill="#a86a2a"/></svg><svg class="a" style="left:513px;top:69px" width="8" height="6" viewBox="0 0 8 6" shape-rendering="geometricPrecision"><path d="M6.5 0.5V3.5H3M4.5 2L3 3.5L4.5 5" stroke="#3a5a90" stroke-width="1" fill="none"/></svg><svg class="a" style="left:503px;top:93px" width="18" height="17" viewBox="0 0 18 17" shape-rendering="geometricPrecision"><rect x="1.5" y="1.5" width="15" height="14" fill="#f4f7fc" stroke="#4f6690"/><rect x="2" y="2" width="14" height="3" fill="#a9c2ea"/><rect x="2" y="12" width="14" height="3" fill="#a9c2ea"/><path d="M3 3.5H8M10 3.5H15M3 13.5H8M10 13.5H15" stroke="#ffffff" stroke-width="1"/><path d="M9 2V5M9 12V15" stroke="#4f6690" stroke-width="1"/><path d="M1.5 5.5H16.5M1.5 11.5H16.5" stroke="#4f6690" stroke-width="1"/><text x="6.3" y="11" font-family="Liberation Serif" font-weight="bold" font-size="9.5" fill="#111">a</text><path d="M2.5 8.5H6M15.5 8.5H12" stroke="#222" stroke-width="1"/><path d="M5 7L6.5 8.5L5 10M13 7L11.5 8.5L13 10" stroke="#222" stroke-width="0.9" fill="none"/></svg><svg class="a" style="left:611px;top:100px" width="5" height="3" viewBox="0 0 5 3" shape-rendering="geometricPrecision"><path d="M0 0H5L2.5 3Z" fill="#5e5e5e"/></svg><svg class="a" style="left:610px;top:127px" width="7" height="7" viewBox="0 0 7 7" shape-rendering="geometricPrecision"><path d="M0.5 6V0.5H6" stroke="#a8aeb6" fill="none"/><path d="M2.5 2.5L6 6M6 3V6H3" stroke="#7d858f" stroke-width="1" fill="none"/></svg><svg class="a" style="left:751px;top:71px" width="5" height="3" viewBox="0 0 5 3" shape-rendering="geometricPrecision"><path d="M0 0H5L2.5 3Z" fill="#5e5e5e"/></svg><svg class="a" style="left:631px;top:93px" width="19" height="19" viewBox="0 0 19 19" shape-rendering="geometricPrecision"><rect x="1" y="1" width="16" height="9" fill="#2c56b0" stroke="#1d3f8a" stroke-width="0.8"/><ellipse cx="9" cy="5.5" rx="5.5" ry="3" fill="#7ea2e0" stroke="#e8f0ff" stroke-width="1"/><path d="M9 3V8" stroke="#e8f0ff" stroke-width="0.8"/><g fill="#f2c648" stroke="#a87a10" stroke-width="0.6"><ellipse cx="13" cy="9" rx="3.2" ry="1.2"/><ellipse cx="13" cy="11" rx="3.2" ry="1.2"/><ellipse cx="13" cy="13" rx="3.2" ry="1.2"/><ellipse cx="12.5" cy="15" rx="3.2" ry="1.2"/><ellipse cx="10.5" cy="17" rx="3.2" ry="1.2"/><ellipse cx="4.5" cy="14.5" rx="3" ry="1.1"/></g></svg><svg class="a" style="left:653px;top:100px" width="5" height="3" viewBox="0 0 5 3" shape-rendering="geometricPrecision"><path d="M0 0H5L2.5 3Z" fill="#5e5e5e"/></svg><svg class="a" style="left:666px;top:95px" width="15" height="14" viewBox="0 0 15 14" shape-rendering="geometricPrecision"><text x="1" y="11.5" font-family="Liberation Sans" font-size="12.5" fill="#111">%</text></svg><svg class="a" style="left:693px;top:98px" width="8" height="10" viewBox="0 0 8 10" shape-rendering="geometricPrecision"><circle cx="4" cy="3.5" r="2" fill="#111"/><path d="M5.6 3.8C5.6 6 4.5 7.5 2.5 8.5" stroke="#111" stroke-width="1.4" fill="none"/></svg><div class="a" style="left:712px;top:92px;width:1px;height:21px;background:#d5d9df"></div><svg class="a" style="left:719px;top:94px" width="19" height="16" viewBox="0 0 19 16" shape-rendering="geometricPrecision"><ellipse cx="14.5" cy="4.3" rx="1.7" ry="2.3" fill="none" stroke="#111" stroke-width="1.15"/><rect x="10.2" y="6.2" width="1.6" height="1.6" fill="#111"/><ellipse cx="9.5" cy="11.4" rx="1.7" ry="2.3" fill="none" stroke="#111" stroke-width="1.15"/><ellipse cx="14.5" cy="11.4" rx="1.7" ry="2.3" fill="none" stroke="#111" stroke-width="1.15"/><rect x="5.2" y="13" width="1.6" height="1.6" fill="#111"/><path d="M9 5H3M5.2 2.8L2.8 5L5.2 7.2" stroke="#2f6ad0" stroke-width="1.5" fill="none"/></svg><svg class="a" style="left:741px;top:94px" width="19" height="16" viewBox="0 0 19 16" shape-rendering="geometricPrecision"><ellipse cx="9.5" cy="4.3" rx="1.7" ry="2.3" fill="none" stroke="#111" stroke-width="1.15"/><ellipse cx="14.5" cy="4.3" rx="1.7" ry="2.3" fill="none" stroke="#111" stroke-width="1.15"/><rect x="5.2" y="6.2" width="1.6" height="1.6" fill="#111"/><ellipse cx="14.5" cy="11.4" rx="1.7" ry="2.3" fill="none" stroke="#111" stroke-width="1.15"/><rect x="10.2" y="13" width="1.6" height="1.6" fill="#111"/><path d="M1.5 11H8.5M6.3 8.8L8.7 11L6.3 13.2" stroke="#2f6ad0" stroke-width="1.5" fill="none"/></svg><svg class="a" style="left:754px;top:127px" width="7" height="7" viewBox="0 0 7 7" shape-rendering="geometricPrecision"><path d="M0.5 6V0.5H6" stroke="#a8aeb6" fill="none"/><path d="M2.5 2.5L6 6M6 3V6H3" stroke="#7d858f" stroke-width="1" fill="none"/></svg><svg class="a" style="left:789px;top:58px" width="34" height="31" viewBox="0 0 34 31" shape-rendering="geometricPrecision"><rect x="1.5" y="1.5" width="28" height="24" fill="#f2f5fa" stroke="#7d90ad"/><rect x="8" y="1.5" width="6.5" height="6" fill="#ef5a44"/><rect x="8" y="7.5" width="11.5" height="6" fill="#5b8ee6"/><rect x="8" y="13.5" width="13" height="6" fill="#ef5a44"/><rect x="8" y="19.5" width="5.5" height="6" fill="#5b8ee6"/><path d="M8 1.5V25.5M14.5 1.5V7.5M14.5 19.5V25.5M21.5 1.5V13.5M1.5 7.5H29.5M1.5 13.5H29.5M1.5 19.5H29.5" stroke="#8ea0bb" stroke-width="1" opacity="0.9"/><rect x="15.5" y="16.5" width="15" height="12" fill="#f7f9fc" stroke="#5f7394"/><path d="M21 18.8L18 20.8L21 22.8" stroke="#111" stroke-width="1.1" fill="none"/><path d="M23 19.8H28M23 21.8H28M27 18.5L24 23" stroke="#111" stroke-width="1" fill="none"/><path d="M17.5 24.5H21.5M17.5 26.5H21.5" stroke="#111" stroke-width="1.2"/><path d="M24 23.8L27.5 25.5L24 27.2" stroke="#111" stroke-width="1.1" fill="none"/></svg><svg class="a" style="left:852px;top:59px" width="34" height="31" viewBox="0 0 34 31" shape-rendering="geometricPrecision"><rect x="0.5" y="0.5" width="28" height="24" fill="#f2f5fa" stroke="#7d90ad"/><rect x="7.5" y="6.5" width="7" height="6" fill="#9bbcf0"/><rect x="14.5" y="6.5" width="7" height="6" fill="#9bbcf0"/><rect x="21.5" y="6.5" width="7" height="6" fill="#9bbcf0"/><rect x="7.5" y="12.5" width="7" height="6" fill="#9bbcf0"/><rect x="14.5" y="12.5" width="7" height="6" fill="#9bbcf0"/><rect x="21.5" y="12.5" width="7" height="6" fill="#9bbcf0"/><rect x="7.5" y="18.5" width="7" height="6" fill="#9bbcf0"/><rect x="14.5" y="18.5" width="7" height="6" fill="#9bbcf0"/><rect x="21.5" y="18.5" width="7" height="6" fill="#9bbcf0"/><path d="M7.5 0.5V24.5" stroke="#7d90ad" stroke-width="1"/><path d="M0.5 6.5H28.5" stroke="#7d90ad" stroke-width="1"/><path d="M14.5 0.5V24.5" stroke="#7d90ad" stroke-width="1"/><path d="M0.5 12.5H28.5" stroke="#7d90ad" stroke-width="1"/><path d="M21.5 0.5V24.5" stroke="#7d90ad" stroke-width="1"/><path d="M0.5 18.5H28.5" stroke="#7d90ad" stroke-width="1"/><path d="M20 20L30 8.5" stroke="#7d828a" stroke-width="4.6" stroke-linecap="round"/><path d="M20 20L30 8.5" stroke="#eef0f2" stroke-width="2.6" stroke-linecap="round"/><path d="M16.7 18.9L21.2 22.9L19.3 25.1L14.8 21.2Z" fill="#a57a32" stroke="#6e5120" stroke-width="0.5"/><path d="M14.8 21.2L19.3 25.1Q16 28.5 10.5 29.5Q12.5 24.5 14.8 21.2Z" fill="#3c6fd4" stroke="#2a54a8" stroke-width="0.5"/></svg><svg class="a" style="left:900px;top:59px" width="34" height="31" viewBox="0 0 34 31" shape-rendering="geometricPrecision"><rect x="0.5" y="0.5" width="28" height="24" fill="#f2f5fa" stroke="#7d90ad"/><rect x="5.5" y="5.5" width="18" height="14" fill="#9bbcf0" stroke="#6d8fd0"/><path d="M5.5 0.5V24.5M23.5 0.5V24.5M0.5 5.5H28.5M0.5 19.5H28.5" stroke="#8ea0bb"/><path d="M20 20L30 8.5" stroke="#7d828a" stroke-width="4.6" stroke-linecap="round"/><path d="M20 20L30 8.5" stroke="#eef0f2" stroke-width="2.6" stroke-linecap="round"/><path d="M16.7 18.9L21.2 22.9L19.3 25.1L14.8 21.2Z" fill="#a57a32" stroke="#6e5120" stroke-width="0.5"/><path d="M14.8 21.2L19.3 25.1Q16 28.5 10.5 29.5Q12.5 24.5 14.8 21.2Z" fill="#3c6fd4" stroke="#2a54a8" stroke-width="0.5"/></svg><svg class="a" style="left:833px;top:111px" width="5" height="3" viewBox="0 0 5 3" shape-rendering="geometricPrecision"><path d="M0 0H5L2.5 3Z" fill="#5e5e5e"/></svg><svg class="a" style="left:888px;top:111px" width="5" height="3" viewBox="0 0 5 3" shape-rendering="geometricPrecision"><path d="M0 0H5L2.5 3Z" fill="#5e5e5e"/></svg><svg class="a" style="left:930px;top:111px" width="5" height="3" viewBox="0 0 5 3" shape-rendering="geometricPrecision"><path d="M0 0H5L2.5 3Z" fill="#5e5e5e"/></svg><svg class="a" style="left:950px;top:57px" width="34" height="30" viewBox="0 0 34 30" shape-rendering="geometricPrecision"><rect x="1.5" y="2.5" width="14" height="5" fill="#f6f8fb" stroke="#5b6d88"/><path d="M8.5 2.5V7.5" stroke="#5b6d88"/><rect x="1.5" y="17.5" width="14" height="10" fill="#f6f8fb" stroke="#5b6d88"/><path d="M8.5 17.5V27.5" stroke="#5b6d88"/><path d="M1.5 22.5H15.5" stroke="#5b6d88"/><rect x="16.5" y="9.5" width="15" height="6" fill="#6a9ae4" stroke="#3f5f98"/><path d="M24 9.5V15.5" stroke="#3f5f98"/><path d="M15 12.5H7M9.5 10L7 12.5L9.5 15" stroke="#333" stroke-width="1.2" fill="none"/></svg><svg class="a" style="left:995px;top:57px" width="30" height="30" viewBox="0 0 30 30" shape-rendering="geometricPrecision"><rect x="1.5" y="2.5" width="14" height="5" fill="#f6f8fb" stroke="#5b6d88"/><path d="M8.5 2.5V7.5" stroke="#5b6d88"/><rect x="1.5" y="17.5" width="14" height="10" fill="#f6f8fb" stroke="#5b6d88"/><path d="M8.5 17.5V27.5" stroke="#5b6d88"/><path d="M1.5 22.5H15.5" stroke="#5b6d88"/><rect x="5.5" y="9.5" width="11" height="6" fill="#f8f9fb" stroke="#24408a" stroke-width="1" stroke-dasharray="1 1"/><path d="M14 8L24 17M23.5 7.5L14.5 16.5" stroke="#ec3a20" stroke-width="1.9"/></svg><svg class="a" style="left:1034px;top:55px" width="33" height="34" viewBox="0 0 33 34" shape-rendering="geometricPrecision"><path d="M1 2.5V5M31 2.5V5M1 3.5H31" stroke="#333" stroke-width="0.9" stroke-dasharray="1.2 1.2"/><path d="M10 3.5H22M12 1.8L10 3.5L12 5.2M20 1.8L22 3.5L20 5.2" stroke="#333" stroke-width="1" fill="none"/><rect x="1.5" y="7.5" width="29" height="19" rx="1.5" fill="#eef2f8" stroke="#5b6d88"/><rect x="9.5" y="11.5" width="9" height="11" fill="#5b8fe0"/><path d="M9.5 7.5V26.5M18.5 7.5V26.5M25.5 7.5V26.5M1.5 11.5H30.5M1.5 22.5H30.5" stroke="#5b6d88"/><path d="M2.5 26.5V29.5H9.5V26.5M9.5 29.5H17V26.5" fill="none" stroke="#5b6d88"/></svg><svg class="a" style="left:964px;top:110px" width="5" height="3" viewBox="0 0 5 3" shape-rendering="geometricPrecision"><path d="M0 0H5L2.5 3Z" fill="#5e5e5e"/></svg><svg class="a" style="left:1006px;top:110px" width="5" height="3" viewBox="0 0 5 3" shape-rendering="geometricPrecision"><path d="M0 0H5L2.5 3Z" fill="#5e5e5e"/></svg><svg class="a" style="left:1048px;top:110px" width="5" height="3" viewBox="0 0 5 3" shape-rendering="geometricPrecision"><path d="M0 0H5L2.5 3Z" fill="#5e5e5e"/></svg><svg class="a" style="left:1086px;top:59px" width="12" height="11" viewBox="0 0 12 11" shape-rendering="geometricPrecision"><path d="M1 1H10V3.3H9.2L8.8 2.2H3.6L7 5.5L3.4 8.8H9L9.6 7.6H10.4V10H1V9L5 5.5L1 2Z" fill="#111"/></svg><svg class="a" style="left:1155px;top:64px" width="5" height="3" viewBox="0 0 5 3" shape-rendering="geometricPrecision"><path d="M0 0H5L2.5 3Z" fill="#5e5e5e"/></svg><svg class="a" style="left:1084px;top:78px" width="16" height="18" viewBox="0 0 16 18" shape-rendering="geometricPrecision"><defs><linearGradient id="fillg" x1="0" y1="0" x2="1" y2="1"><stop offset="0" stop-color="#ffffff"/><stop offset="1" stop-color="#c9d9f0"/></linearGradient></defs><rect x="1.5" y="1.5" width="12" height="15" fill="url(#fillg)" stroke="#5b7fb8"/><rect x="1.5" y="1.5" width="12" height="2" fill="#7fa4dc"/><path d="M6 6H9V9.5H11L7.5 13.5L4 9.5H6Z" fill="#3a7ae0" stroke="#2558b0" stroke-width="0.6"/></svg><svg class="a" style="left:1122px;top:86px" width="5" height="3" viewBox="0 0 5 3" shape-rendering="geometricPrecision"><path d="M0 0H5L2.5 3Z" fill="#5e5e5e"/></svg><svg class="a" style="left:1084px;top:101px" width="17" height="16" viewBox="0 0 17 16" shape-rendering="geometricPrecision"><defs><linearGradient id="erg" x1="0" y1="0" x2="0" y2="1"><stop offset="0" stop-color="#ffffff"/><stop offset="1" stop-color="#cfd6df"/></linearGradient></defs><path d="M1.5 10.5L9 3C10 2 11.5 2 12.5 3L13.5 4C14.5 5 14.5 6.5 13.5 7.5L6.5 14.5H4.5L1.5 11.5Z" fill="url(#erg)" stroke="#5a6068" stroke-width="0.9"/><path d="M3 9L7.5 13.5" stroke="#8a9098" stroke-width="0.8"/><path d="M7 14.5H15" stroke="#111" stroke-width="1.2"/></svg><svg class="a" style="left:1133px;top:108px" width="5" height="3" viewBox="0 0 5 3" shape-rendering="geometricPrecision"><path d="M0 0H5L2.5 3Z" fill="#5e5e5e"/></svg><svg class="a" style="left:1168px;top:56px" width="34" height="32" viewBox="0 0 34 32" shape-rendering="geometricPrecision"><defs><linearGradient id="fun" x1="0" y1="0" x2="1" y2="0"><stop offset="0" stop-color="#f0f1f3"/><stop offset="0.5" stop-color="#b8bcc2"/><stop offset="1" stop-color="#73787f"/></linearGradient></defs><path d="M11 7H31L23.5 17V29L19 29V17Z" fill="url(#fun)" stroke="#8a9098" stroke-width="0.6"/><ellipse cx="21" cy="7.5" rx="10" ry="1.3" fill="#dfe2e6" stroke="#8a9098" stroke-width="0.5"/><text x="0.5" y="15.5" font-family="Liberation Serif" font-weight="bold" font-size="17.5" fill="#2f5fb8">A</text><text x="1.5" y="30.5" font-family="Liberation Serif" font-weight="bold" font-size="17" fill="#a8362a">Z</text></svg><svg class="a" style="left:1196px;top:111px" width="5" height="3" viewBox="0 0 5 3" shape-rendering="geometricPrecision"><path d="M0 0H5L2.5 3Z" fill="#5e5e5e"/></svg><svg class="a" style="left:1210px;top:58px" width="31" height="28" viewBox="0 0 31 28" shape-rendering="geometricPrecision"><defs><linearGradient id="bn" x1="0" y1="0" x2="1" y2="0"><stop offset="0" stop-color="#d5dff2"/><stop offset="0.35" stop-color="#8ea4cc"/><stop offset="1" stop-color="#3d5288"/></linearGradient></defs><rect x="8.5" y="1.5" width="5" height="4" rx="1.5" fill="url(#bn)" stroke="#4a5d8e" stroke-width="0.6"/><rect x="16.5" y="1.5" width="5" height="4" rx="1.5" fill="url(#bn)" stroke="#4a5d8e" stroke-width="0.6"/><rect x="6" y="5" width="9.5" height="9" rx="2" fill="url(#bn)" stroke="#4a5d8e" stroke-width="0.6"/><rect x="14.5" y="5" width="9.5" height="9" rx="2" fill="url(#bn)" stroke="#4a5d8e" stroke-width="0.6"/><rect x="2" y="13" width="13" height="13" rx="2.5" fill="url(#bn)" stroke="#4a5d8e" stroke-width="0.6"/><rect x="16" y="13" width="13" height="13" rx="2.5" fill="url(#bn)" stroke="#4a5d8e" stroke-width="0.6"/><path d="M2.5 16H14.5M16.5 16H28.5M6.5 7.5H15M15 7.5H23.5" stroke="#eef2fa" stroke-width="0.7" opacity="0.8"/></svg><svg class="a" style="left:1242px;top:111px" width="5" height="3" viewBox="0 0 5 3" shape-rendering="geometricPrecision"><path d="M0 0H5L2.5 3Z" fill="#5e5e5e"/></svg>
</body></html>
